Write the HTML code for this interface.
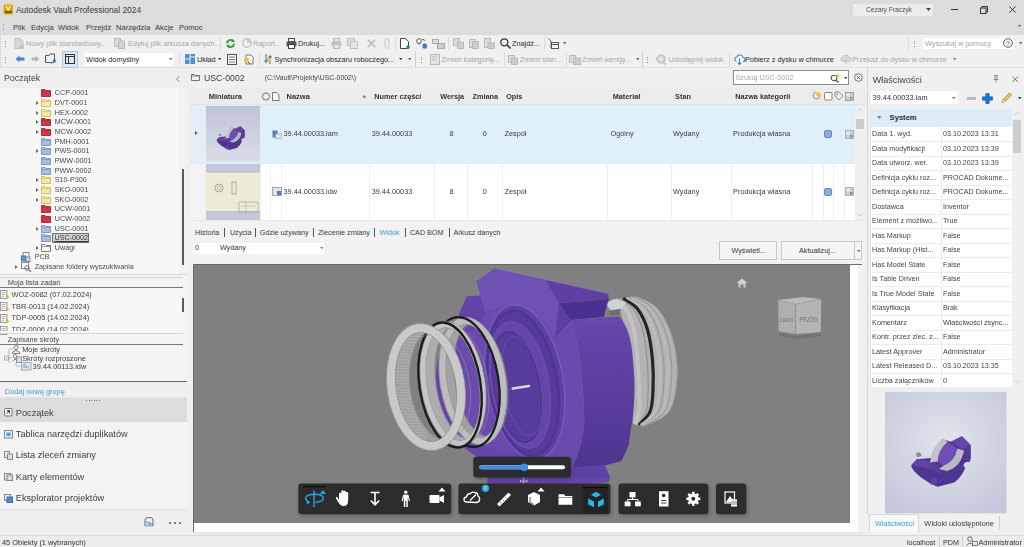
<!DOCTYPE html>
<html><head><meta charset="utf-8">
<style>
*{margin:0;padding:0;box-sizing:border-box}
html,body{width:1024px;height:547px;overflow:hidden;background:#f0f0f0;font-family:"Liberation Sans",sans-serif;color:#333}
.a{position:absolute;white-space:nowrap}
svg.a{overflow:visible}
</style></head>
<body><div style="position:absolute;left:0;top:0;width:1024px;height:547px;filter:blur(0.3px)">
<div class="a" style="left:0px;top:0px;width:1024px;height:35px;background:#dcdcdc;"></div>
<svg class="a" style="left:3px;top:4px;" width="11" height="11" viewBox="0 0 11 11"><rect x="0.5" y="0.5" width="9.5" height="10" rx="1.5" fill="#d9a800"/><rect x="2" y="7" width="6.5" height="2" fill="#6b5200"/><path d="M3 1.8 L5.25 6 L7.5 1.8" stroke="#fff3b0" stroke-width="1.3" fill="none"/></svg>
<div class="a" style="left:16px;top:4.50px;font-size:8.4px;line-height:10px;color:#3a3a3a;">Autodesk Vault Professional 2024</div>
<div class="a" style="left:853px;top:4px;width:80px;height:12px;background:#ececec;"></div>
<div class="a" style="left:866px;top:5.00px;font-size:6.6px;line-height:10px;color:#505050;">Cezary Fraczyk</div>
<svg class="a" style="left:926px;top:8px;" width="6" height="4" viewBox="0 0 6 4"><path d="M0 0 L5 0 L2.5 3 Z" fill="#444"/></svg>
<div class="a" style="left:951px;top:9px;width:7px;height:1.2px;background:#333;"></div>
<svg class="a" style="left:980px;top:6px;" width="8" height="8" viewBox="0 0 8 8"><rect x="0.5" y="2" width="5.5" height="5.5" fill="none" stroke="#333" stroke-width="1"/><path d="M2 2 V0.5 H7.5 V6 H6" fill="none" stroke="#333" stroke-width="1"/></svg>
<svg class="a" style="left:1009px;top:6px;" width="7" height="7" viewBox="0 0 7 7"><path d="M0.5 0.5 L6.5 6.5 M6.5 0.5 L0.5 6.5" stroke="#333" stroke-width="1"/></svg>
<svg class="a" style="left:1018px;top:25px;" width="4" height="3" viewBox="0 0 4 3"><path d="M0 0 L3 0 L1.5 2 Z" fill="#555"/></svg>
<div class="a" style="left:3px;top:24px;width:1px;height:1px;background:#9a9a9a;"></div>
<div class="a" style="left:3px;top:26.5px;width:1px;height:1px;background:#9a9a9a;"></div>
<div class="a" style="left:3px;top:29px;width:1px;height:1px;background:#9a9a9a;"></div>
<div class="a" style="left:13px;top:22.50px;font-size:7.6px;line-height:10px;color:#3a3a3a;">Plik</div>
<div class="a" style="left:31px;top:22.50px;font-size:7.6px;line-height:10px;color:#3a3a3a;">Edycja</div>
<div class="a" style="left:58px;top:22.50px;font-size:7.6px;line-height:10px;color:#3a3a3a;">Widok</div>
<div class="a" style="left:86px;top:22.50px;font-size:7.6px;line-height:10px;color:#3a3a3a;">Przejdź</div>
<div class="a" style="left:116px;top:22.50px;font-size:7.6px;line-height:10px;color:#3a3a3a;">Narzędzia</div>
<div class="a" style="left:155px;top:22.50px;font-size:7.6px;line-height:10px;color:#3a3a3a;">Akcje</div>
<div class="a" style="left:179px;top:22.50px;font-size:7.6px;line-height:10px;color:#3a3a3a;">Pomoc</div>
<div class="a" style="left:0px;top:35px;width:1024px;height:33px;background:#f0f0f0;"></div>
<div class="a" style="left:0px;top:67px;width:1024px;height:1px;background:#e3e3e3;"></div>
<div class="a" style="left:0px;top:35px;width:1px;height:33px;background:#dedede;"></div>
<div class="a" style="left:5px;top:40.5px;width:1px;height:1px;background:#8a8a8a;"></div>
<div class="a" style="left:5px;top:43.0px;width:1px;height:1px;background:#8a8a8a;"></div>
<div class="a" style="left:5px;top:45.5px;width:1px;height:1px;background:#8a8a8a;"></div>
<div class="a" style="left:5px;top:56.5px;width:1px;height:1px;background:#8a8a8a;"></div>
<div class="a" style="left:5px;top:59.0px;width:1px;height:1px;background:#8a8a8a;"></div>
<div class="a" style="left:5px;top:61.5px;width:1px;height:1px;background:#8a8a8a;"></div>
<svg class="a" style="left:14px;top:38px;" width="10" height="11" viewBox="0 0 10 11"><path d="M1 0.5 H6 L9 3.5 V10.5 H1 Z" fill="#d8d8d8" stroke="#bdbdbd"/><rect x="5" y="7" width="5" height="4" fill="#c8c8c8"/></svg>
<div class="a" style="left:26px;top:38.50px;font-size:7.3px;line-height:10px;color:#a8a8a8;">Nowy plik standardowy...</div>
<svg class="a" style="left:114px;top:38px;" width="12" height="11" viewBox="0 0 12 11"><rect x="0.5" y="0.5" width="6" height="8" fill="#dadada" stroke="#bbb"/><rect x="4.5" y="3" width="6" height="7.5" fill="#d0d0d0" stroke="#bbb"/></svg>
<div class="a" style="left:128px;top:38.50px;font-size:7.3px;line-height:10px;color:#a8a8a8;">Edytuj plik arkusza danych...</div>
<div class="a" style="left:220px;top:37px;width:1px;height:13px;background:#dcdcdc;"></div>
<svg class="a" style="left:225px;top:38px;" width="11" height="11" viewBox="0 0 11 11"><path d="M2 5.5 A3.6 3.6 0 0 1 8.6 3.5" stroke="#2e9e3e" stroke-width="1.8" fill="none"/><path d="M9 5.5 A3.6 3.6 0 0 1 2.4 7.5" stroke="#2e9e3e" stroke-width="1.8" fill="none"/><path d="M7 1 L10 3.8 L6.5 4.6Z" fill="#2e9e3e"/><path d="M4 10 L1 7.2 L4.5 6.4Z" fill="#2e9e3e"/></svg>
<svg class="a" style="left:242px;top:38px;" width="10" height="10" viewBox="0 0 10 10"><circle cx="5" cy="5" r="4.2" fill="none" stroke="#c2c2c2" stroke-width="1.4"/><path d="M5 5 V1.5 A3.5 3.5 0 0 1 8.5 5Z" fill="#c8c8c8"/></svg>
<div class="a" style="left:253px;top:38.50px;font-size:7.3px;line-height:10px;color:#a8a8a8;">Raport...</div>
<svg class="a" style="left:286px;top:38px;" width="11" height="11" viewBox="0 0 11 11"><rect x="2.5" y="0.5" width="6" height="3" fill="#fff" stroke="#444"/><rect x="0.5" y="3.5" width="10" height="5" rx="1" fill="#555"/><rect x="2.5" y="6.5" width="6" height="4" fill="#fff" stroke="#444"/></svg>
<div class="a" style="left:298px;top:38.50px;font-size:7.3px;line-height:10px;color:#2a2a2a;">Drukuj...</div>
<svg class="a" style="left:331px;top:38px;" width="11" height="11" viewBox="0 0 11 11"><rect x="2.5" y="0.5" width="6" height="3" fill="#e6e6e6" stroke="#bbb"/><rect x="0.5" y="3.5" width="10" height="5" rx="1" fill="#c4c4c4"/><rect x="2.5" y="6.5" width="6" height="4" fill="#e6e6e6" stroke="#bbb"/></svg>
<svg class="a" style="left:347px;top:38px;" width="11" height="11" viewBox="0 0 11 11"><rect x="0.5" y="0.5" width="7" height="7" fill="#e0e0e0" stroke="#c0c0c0"/><rect x="3.5" y="3.5" width="7" height="7" fill="#e6e6e6" stroke="#c0c0c0"/></svg>
<svg class="a" style="left:367px;top:39px;" width="9" height="9" viewBox="0 0 9 9"><path d="M0.8 0.8 L8.2 8.2 M8.2 0.8 L0.8 8.2" stroke="#b5b5b5" stroke-width="1.4"/></svg>
<svg class="a" style="left:384px;top:38px;" width="6" height="11" viewBox="0 0 6 11"><rect x="1" y="0.8" width="4" height="9.5" rx="2" fill="none" stroke="#c4c4c4" stroke-width="1"/></svg>
<div class="a" style="left:395px;top:37px;width:1px;height:13px;background:#dcdcdc;"></div>
<svg class="a" style="left:400px;top:38px;" width="12" height="11" viewBox="0 0 12 11"><path d="M0.5 0.5 H5.5 L8.5 3.5 V10.5 H0.5Z" fill="#fff" stroke="#444"/><path d="M8 7 V11 M6 9 H10" stroke="#2e9e3e" stroke-width="1.6"/></svg>
<svg class="a" style="left:416px;top:38px;" width="12" height="11" viewBox="0 0 12 11"><circle cx="3" cy="3" r="2.3" fill="#fff" stroke="#555"/><path d="M1 5 Q3 8 5 5" fill="#777"/><rect x="6.5" y="5.5" width="4.5" height="5" rx="1.5" fill="#3b7fc4"/><path d="M6 1 L9 2.5" stroke="#555"/></svg>
<svg class="a" style="left:432px;top:38px;" width="13" height="11" viewBox="0 0 13 11"><rect x="0.5" y="1.5" width="6" height="4" fill="#ddd" stroke="#aaa"/><rect x="5.5" y="5.5" width="7" height="5" fill="#ccc" stroke="#aaa"/></svg>
<div class="a" style="left:448px;top:37px;width:1px;height:13px;background:#dcdcdc;"></div>
<svg class="a" style="left:453px;top:38px;" width="11" height="11" viewBox="0 0 11 11"><rect x="0.5" y="0.5" width="6" height="7" fill="#ddd" stroke="#bbb"/><rect x="4.5" y="4" width="6" height="6.5" fill="#d0d0d0" stroke="#bbb"/></svg>
<svg class="a" style="left:469px;top:38px;" width="10" height="11" viewBox="0 0 10 11"><rect x="0.5" y="1.5" width="6" height="8" fill="#ddd" stroke="#bbb"/><rect x="3.5" y="3.5" width="6" height="7" fill="#ccc" stroke="#bbb"/></svg>
<svg class="a" style="left:484px;top:38px;" width="11" height="11" viewBox="0 0 11 11"><rect x="0.5" y="0.5" width="6" height="9" fill="#ddd" stroke="#bbb"/><rect x="4" y="5" width="6.5" height="5.5" fill="#ccc" stroke="#bbb"/></svg>
<svg class="a" style="left:500px;top:38px;" width="11" height="11" viewBox="0 0 11 11"><circle cx="4.3" cy="4.3" r="3.5" fill="none" stroke="#333" stroke-width="1.3"/><path d="M6.8 6.8 L10.5 10.5" stroke="#333" stroke-width="1.6"/></svg>
<div class="a" style="left:512px;top:38.50px;font-size:7.3px;line-height:10px;color:#2a2a2a;">Znajdź...</div>
<div class="a" style="left:544px;top:37px;width:1px;height:13px;background:#dcdcdc;"></div>
<svg class="a" style="left:548px;top:38px;" width="11" height="11" viewBox="0 0 11 11"><path d="M0.5 0.5 L3 3 V10" stroke="#666" fill="none"/><rect x="3.5" y="4.5" width="7" height="6" fill="#f4f4f4" stroke="#555"/><path d="M3.5 6.5 H10.5" stroke="#555"/></svg>
<svg class="a" style="left:563px;top:42px;" width="4" height="3" viewBox="0 0 4 3"><path d="M0 0 L3.5 0 L1.75 2.2 Z" fill="#666"/></svg>
<div class="a" style="left:908px;top:36px;width:1px;height:14px;background:#dcdcdc;"></div>
<div class="a" style="left:914px;top:40.5px;width:1px;height:1px;background:#8a8a8a;"></div>
<div class="a" style="left:914px;top:43.0px;width:1px;height:1px;background:#8a8a8a;"></div>
<div class="a" style="left:914px;top:45.5px;width:1px;height:1px;background:#8a8a8a;"></div>
<div class="a" style="left:923px;top:38px;width:91px;height:11px;background:#ffffff;"></div>
<div class="a" style="left:925px;top:38.50px;font-size:7.3px;line-height:10px;color:#a5a5a5;">Wyszukaj w pomocy</div>
<svg class="a" style="left:1003px;top:38px;" width="11" height="11" viewBox="0 0 11 11"><circle cx="5" cy="5" r="4.3" fill="none" stroke="#444" stroke-width="0.9"/><text x="5" y="7.8" font-size="7" text-anchor="middle" fill="#444" font-family="Liberation Sans">?</text></svg>
<svg class="a" style="left:1019px;top:42px;" width="4" height="3" viewBox="0 0 4 3"><path d="M0 0 L3.5 0 L1.75 2.2 Z" fill="#666"/></svg>
<svg class="a" style="left:15px;top:55px;" width="10" height="8" viewBox="0 0 10 8"><path d="M0.5 4 L4.5 0.8 V2.6 H9.5 V5.4 H4.5 V7.2Z" fill="#3a86cf"/></svg>
<svg class="a" style="left:31px;top:55px;" width="9" height="8" viewBox="0 0 9 8"><path d="M8.5 4 L4.5 0.8 V2.6 H0.5 V5.4 H4.5 V7.2Z" fill="#b8b8b8"/></svg>
<svg class="a" style="left:45px;top:53px;" width="12" height="12" viewBox="0 0 12 12"><path d="M0.5 2.5 H4 L5 1 H9.5 V9.5 H0.5Z" fill="none" stroke="#555"/><path d="M6 10 Q9 10 9.5 7 L8 7.5 M9.5 7 L11 8.5" stroke="#2f7fc8" stroke-width="1.4" fill="none"/></svg>
<div class="a" style="left:62px;top:51px;width:16px;height:17px;background:#dbe9f5;border:1px solid #a9cbe6;"></div>
<svg class="a" style="left:65px;top:54px;" width="10" height="10" viewBox="0 0 10 10"><rect x="0.5" y="0.5" width="9" height="9" fill="none" stroke="#333" stroke-width="1"/><path d="M0.5 2.5 H9.5 M3.5 2.5 V9.5" stroke="#333" stroke-width="1"/></svg>
<div class="a" style="left:84px;top:53px;width:90px;height:13px;background:#ffffff;"></div>
<div class="a" style="left:86px;top:54.50px;font-size:7.3px;line-height:10px;color:#2a2a2a;">Widok domyślny</div>
<svg class="a" style="left:169px;top:58px;" width="4" height="3" viewBox="0 0 4 3"><path d="M0 0 L3.5 0 L1.75 2.2 Z" fill="#777"/></svg>
<div class="a" style="left:179px;top:52px;width:1px;height:14px;background:#dcdcdc;"></div>
<svg class="a" style="left:185px;top:54px;" width="11" height="11" viewBox="0 0 11 11"><rect x="0" y="0" width="4.5" height="4.5" fill="#4a92d6"/><rect x="5.5" y="0" width="4.5" height="2.5" fill="#4a92d6"/><rect x="5.5" y="3.5" width="4.5" height="6.5" fill="#4a92d6"/><rect x="0" y="5.5" width="4.5" height="4.5" fill="#4a92d6"/></svg>
<div class="a" style="left:197px;top:54.50px;font-size:7.3px;line-height:10px;color:#2a2a2a;">Układ</div>
<svg class="a" style="left:218px;top:58px;" width="4" height="3" viewBox="0 0 4 3"><path d="M0 0 L3.5 0 L1.75 2.2 Z" fill="#444"/></svg>
<svg class="a" style="left:227px;top:54px;" width="10" height="11" viewBox="0 0 10 11"><rect x="0.5" y="0.5" width="9" height="10" fill="#fafafa" stroke="#555"/><path d="M2 3 H8 M2 5.5 H8 M2 8 H8" stroke="#777"/></svg>
<svg class="a" style="left:243px;top:54px;" width="11" height="11" viewBox="0 0 11 11"><path d="M3 1 H8 L10 3 V10 H3Z" fill="#fff" stroke="#777"/><circle cx="3.5" cy="6" r="2.5" fill="#f0c040"/><path d="M5 8 L7 10" stroke="#555"/></svg>
<div class="a" style="left:259px;top:52px;width:1px;height:14px;background:#dcdcdc;"></div>
<svg class="a" style="left:264px;top:53px;" width="8" height="12" viewBox="0 0 8 12"><path d="M2 1 V9 L0.5 7.5 M2 9 L3.5 7.5" stroke="#3a86cf" stroke-width="1.2" fill="none"/><path d="M6 11 V3 L4.5 4.5 M6 3 L7.5 4.5" stroke="#777" stroke-width="1.2" fill="none"/><rect x="3" y="5" width="3.5" height="4" fill="#f0c040"/></svg>
<div class="a" style="left:274.5px;top:54.50px;font-size:7.3px;line-height:10px;color:#2a2a2a;">Synchronizacja obszaru roboczego...</div>
<svg class="a" style="left:399px;top:58px;" width="4" height="3" viewBox="0 0 4 3"><path d="M0 0 L3.5 0 L1.75 2.2 Z" fill="#444"/></svg>
<svg class="a" style="left:408px;top:58px;" width="4" height="3" viewBox="0 0 4 3"><path d="M0 0 L3.5 0 L1.75 2.2 Z" fill="#666"/></svg>
<div class="a" style="left:415px;top:51px;width:1px;height:16px;background:#cfcfcf;"></div>
<div class="a" style="left:421px;top:56.5px;width:1px;height:1px;background:#8a8a8a;"></div>
<div class="a" style="left:421px;top:59.0px;width:1px;height:1px;background:#8a8a8a;"></div>
<div class="a" style="left:421px;top:61.5px;width:1px;height:1px;background:#8a8a8a;"></div>
<svg class="a" style="left:430px;top:54px;" width="11" height="11" viewBox="0 0 11 11"><rect x="0.5" y="0.5" width="9" height="10" fill="#e2e2e2" stroke="#bbb"/><path d="M2 3 H7 M2 5.5 H6" stroke="#c0c0c0"/></svg>
<div class="a" style="left:441.5px;top:54.50px;font-size:7.3px;line-height:10px;color:#a8a8a8;">Zmień kategorię...</div>
<div class="a" style="left:504px;top:52px;width:1px;height:14px;background:#dcdcdc;"></div>
<svg class="a" style="left:508px;top:54px;" width="10" height="11" viewBox="0 0 10 11"><rect x="0.5" y="1.5" width="6" height="7" fill="#ddd" stroke="#bbb"/><rect x="3.5" y="4" width="6" height="6.5" fill="#ccc" stroke="#bbb"/></svg>
<div class="a" style="left:519.7px;top:54.50px;font-size:7.3px;line-height:10px;color:#a8a8a8;">Zmień stan...</div>
<div class="a" style="left:566px;top:52px;width:1px;height:14px;background:#dcdcdc;"></div>
<svg class="a" style="left:569px;top:54px;" width="12" height="11" viewBox="0 0 12 11"><rect x="0.5" y="1.5" width="6" height="7" fill="#ddd" stroke="#bbb"/><rect x="4.5" y="4" width="7" height="6.5" fill="#ccc" stroke="#bbb"/></svg>
<div class="a" style="left:582px;top:54.50px;font-size:7.3px;line-height:10px;color:#a8a8a8;">Zmień wersję...</div>
<svg class="a" style="left:636px;top:58px;" width="4" height="3" viewBox="0 0 4 3"><path d="M0 0 L3.5 0 L1.75 2.2 Z" fill="#666"/></svg>
<div class="a" style="left:642px;top:51px;width:1px;height:16px;background:#cfcfcf;"></div>
<div class="a" style="left:647px;top:56.5px;width:1px;height:1px;background:#8a8a8a;"></div>
<div class="a" style="left:647px;top:59.0px;width:1px;height:1px;background:#8a8a8a;"></div>
<div class="a" style="left:647px;top:61.5px;width:1px;height:1px;background:#8a8a8a;"></div>
<svg class="a" style="left:656px;top:54px;" width="10" height="11" viewBox="0 0 10 11"><circle cx="5" cy="5" r="4.3" fill="#d2d2d2" stroke="#bdbdbd"/><circle cx="5" cy="5" r="2" fill="#e8e8e8"/><path d="M7 8 L9.5 10.5" stroke="#bbb" stroke-width="1.4"/></svg>
<div class="a" style="left:668.5px;top:54.50px;font-size:7.3px;line-height:10px;color:#a8a8a8;">Udostępnij widok</div>
<div class="a" style="left:729px;top:52px;width:1px;height:14px;background:#dcdcdc;"></div>
<svg class="a" style="left:734px;top:54px;" width="11" height="11" viewBox="0 0 11 11"><path d="M2.5 7.5 A2.3 2.3 0 0 1 2.8 3 A3.3 3.3 0 0 1 9 3.5 A2 2 0 0 1 9 7.5" fill="#fff" stroke="#3a86cf" stroke-width="1.1"/><path d="M5.5 4.5 V10.5 M3.8 8.8 L5.5 10.5 L7.2 8.8" stroke="#3a86cf" stroke-width="1.1" fill="none"/></svg>
<div class="a" style="left:745px;top:54.50px;font-size:7.3px;line-height:10px;color:#2a2a2a;">Pobierz z dysku w chmurze</div>
<svg class="a" style="left:840px;top:54px;" width="11" height="11" viewBox="0 0 11 11"><path d="M2.5 7.5 A2.3 2.3 0 0 1 2.8 3 A3.3 3.3 0 0 1 9 3.5 A2 2 0 0 1 9 7.5Z" fill="#d8d8d8" stroke="#c4c4c4" stroke-width="1"/><path d="M5.5 10.5 V5" stroke="#c4c4c4" stroke-width="1.1"/></svg>
<div class="a" style="left:852px;top:54.50px;font-size:7.3px;line-height:10px;color:#a8a8a8;">Przekaż do dysku w chmurze</div>
<svg class="a" style="left:953px;top:58px;" width="4" height="3" viewBox="0 0 4 3"><path d="M0 0 L3.5 0 L1.75 2.2 Z" fill="#777"/></svg>
<div class="a" style="left:0px;top:68px;width:188px;height:20px;background:#efefef;"></div>
<div class="a" style="left:4px;top:73.30px;font-size:8.8px;line-height:10px;color:#454545;">Początek</div>
<svg class="a" style="left:175.5px;top:75.5px;" width="4" height="6" viewBox="0 0 4 6"><path d="M3.2 0.3 L0.6 3 L3.2 5.7" stroke="#666" stroke-width="0.8" fill="none"/></svg>
<div class="a" style="left:0px;top:88px;width:179px;height:186px;background:#f7f7f7;"></div>
<div class="a" style="left:179px;top:88px;width:8px;height:186px;background:#f2f2f2;"></div>
<div class="a" style="left:181.5px;top:169px;width:2px;height:96px;background:#5a5a5a;"></div>
<svg class="a" style="left:40.5px;top:89.4px;" width="11" height="8" viewBox="0 0 11 8"><path d="M0.5 0.5 H4 L5 1.5 H9.5 V7.5 H0.5Z" fill="#d03848" stroke="#b82a3a" stroke-width="1"/><path d="M0.5 2.5 H9.5" stroke="#b82a3a" stroke-width="0.7"/></svg>
<div class="a" style="left:54.8px;top:88.40px;font-size:7.2px;line-height:10px;color:#4a4a4a;">CCP-0001</div>
<svg class="a" style="left:35.5px;top:101.05000000000001px;" width="3" height="5" viewBox="0 0 3 5"><path d="M0 0 L2.6 2 L0 4Z" fill="#666"/></svg>
<svg class="a" style="left:40.5px;top:99.05000000000001px;" width="11" height="8" viewBox="0 0 11 8"><path d="M0.5 0.5 H4 L5 1.5 H9.5 V7.5 H0.5Z" fill="#f2ec9a" stroke="#c9c270" stroke-width="1"/><path d="M0.5 2.5 H9.5" stroke="#c9c270" stroke-width="0.7"/></svg>
<div class="a" style="left:54.8px;top:98.05px;font-size:7.2px;line-height:10px;color:#4a4a4a;">DVT-0001</div>
<svg class="a" style="left:35.5px;top:110.7px;" width="3" height="5" viewBox="0 0 3 5"><path d="M0 0 L2.6 2 L0 4Z" fill="#666"/></svg>
<svg class="a" style="left:40.5px;top:108.7px;" width="11" height="8" viewBox="0 0 11 8"><path d="M0.5 0.5 H4 L5 1.5 H9.5 V7.5 H0.5Z" fill="#f2ec9a" stroke="#c9c270" stroke-width="1"/><path d="M0.5 2.5 H9.5" stroke="#c9c270" stroke-width="0.7"/></svg>
<div class="a" style="left:54.8px;top:107.70px;font-size:7.2px;line-height:10px;color:#4a4a4a;">HEX-0002</div>
<svg class="a" style="left:35.5px;top:120.35000000000001px;" width="3" height="5" viewBox="0 0 3 5"><path d="M0 0 L2.6 2 L0 4Z" fill="#666"/></svg>
<svg class="a" style="left:40.5px;top:118.35000000000001px;" width="11" height="8" viewBox="0 0 11 8"><path d="M0.5 0.5 H4 L5 1.5 H9.5 V7.5 H0.5Z" fill="#d03848" stroke="#b82a3a" stroke-width="1"/><path d="M0.5 2.5 H9.5" stroke="#b82a3a" stroke-width="0.7"/></svg>
<div class="a" style="left:54.8px;top:117.35px;font-size:7.2px;line-height:10px;color:#4a4a4a;">MCW-0001</div>
<svg class="a" style="left:35.5px;top:130.0px;" width="3" height="5" viewBox="0 0 3 5"><path d="M0 0 L2.6 2 L0 4Z" fill="#666"/></svg>
<svg class="a" style="left:40.5px;top:128.0px;" width="11" height="8" viewBox="0 0 11 8"><path d="M0.5 0.5 H4 L5 1.5 H9.5 V7.5 H0.5Z" fill="#d03848" stroke="#b82a3a" stroke-width="1"/><path d="M0.5 2.5 H9.5" stroke="#b82a3a" stroke-width="0.7"/></svg>
<div class="a" style="left:54.8px;top:127.00px;font-size:7.2px;line-height:10px;color:#4a4a4a;">MCW-0002</div>
<svg class="a" style="left:40.5px;top:137.65px;" width="11" height="8" viewBox="0 0 11 8"><path d="M0.5 0.5 H4 L5 1.5 H9.5 V7.5 H0.5Z" fill="#a9bedf" stroke="#8097c0" stroke-width="1"/><path d="M0.5 2.5 H9.5" stroke="#8097c0" stroke-width="0.7"/></svg>
<div class="a" style="left:54.8px;top:136.65px;font-size:7.2px;line-height:10px;color:#4a4a4a;">PMH-0001</div>
<svg class="a" style="left:35.5px;top:149.3px;" width="3" height="5" viewBox="0 0 3 5"><path d="M0 0 L2.6 2 L0 4Z" fill="#666"/></svg>
<svg class="a" style="left:40.5px;top:147.3px;" width="11" height="8" viewBox="0 0 11 8"><path d="M0.5 0.5 H4 L5 1.5 H9.5 V7.5 H0.5Z" fill="#a9bedf" stroke="#8097c0" stroke-width="1"/><path d="M0.5 2.5 H9.5" stroke="#8097c0" stroke-width="0.7"/></svg>
<div class="a" style="left:54.8px;top:146.30px;font-size:7.2px;line-height:10px;color:#4a4a4a;">PWS-0001</div>
<svg class="a" style="left:40.5px;top:156.95px;" width="11" height="8" viewBox="0 0 11 8"><path d="M0.5 0.5 H4 L5 1.5 H9.5 V7.5 H0.5Z" fill="#a9bedf" stroke="#8097c0" stroke-width="1"/><path d="M0.5 2.5 H9.5" stroke="#8097c0" stroke-width="0.7"/></svg>
<div class="a" style="left:54.8px;top:155.95px;font-size:7.2px;line-height:10px;color:#4a4a4a;">PWW-0001</div>
<svg class="a" style="left:40.5px;top:166.60000000000002px;" width="11" height="8" viewBox="0 0 11 8"><path d="M0.5 0.5 H4 L5 1.5 H9.5 V7.5 H0.5Z" fill="#a9bedf" stroke="#8097c0" stroke-width="1"/><path d="M0.5 2.5 H9.5" stroke="#8097c0" stroke-width="0.7"/></svg>
<div class="a" style="left:54.8px;top:165.60px;font-size:7.2px;line-height:10px;color:#4a4a4a;">PWW-0002</div>
<svg class="a" style="left:35.5px;top:178.25px;" width="3" height="5" viewBox="0 0 3 5"><path d="M0 0 L2.6 2 L0 4Z" fill="#666"/></svg>
<svg class="a" style="left:40.5px;top:176.25px;" width="11" height="8" viewBox="0 0 11 8"><path d="M0.5 0.5 H4 L5 1.5 H9.5 V7.5 H0.5Z" fill="#f2ec9a" stroke="#c9c270" stroke-width="1"/><path d="M0.5 2.5 H9.5" stroke="#c9c270" stroke-width="0.7"/></svg>
<div class="a" style="left:54.8px;top:175.25px;font-size:7.2px;line-height:10px;color:#4a4a4a;">S10-P300</div>
<svg class="a" style="left:35.5px;top:187.9px;" width="3" height="5" viewBox="0 0 3 5"><path d="M0 0 L2.6 2 L0 4Z" fill="#666"/></svg>
<svg class="a" style="left:40.5px;top:185.9px;" width="11" height="8" viewBox="0 0 11 8"><path d="M0.5 0.5 H4 L5 1.5 H9.5 V7.5 H0.5Z" fill="#f2ec9a" stroke="#c9c270" stroke-width="1"/><path d="M0.5 2.5 H9.5" stroke="#c9c270" stroke-width="0.7"/></svg>
<div class="a" style="left:54.8px;top:184.90px;font-size:7.2px;line-height:10px;color:#4a4a4a;">SKO-0001</div>
<svg class="a" style="left:35.5px;top:197.55px;" width="3" height="5" viewBox="0 0 3 5"><path d="M0 0 L2.6 2 L0 4Z" fill="#666"/></svg>
<svg class="a" style="left:40.5px;top:195.55px;" width="11" height="8" viewBox="0 0 11 8"><path d="M0.5 0.5 H4 L5 1.5 H9.5 V7.5 H0.5Z" fill="#f2ec9a" stroke="#c9c270" stroke-width="1"/><path d="M0.5 2.5 H9.5" stroke="#c9c270" stroke-width="0.7"/></svg>
<div class="a" style="left:54.8px;top:194.55px;font-size:7.2px;line-height:10px;color:#4a4a4a;">SKO-0002</div>
<svg class="a" style="left:40.5px;top:205.20000000000002px;" width="11" height="8" viewBox="0 0 11 8"><path d="M0.5 0.5 H4 L5 1.5 H9.5 V7.5 H0.5Z" fill="#d03848" stroke="#b82a3a" stroke-width="1"/><path d="M0.5 2.5 H9.5" stroke="#b82a3a" stroke-width="0.7"/></svg>
<div class="a" style="left:54.8px;top:204.20px;font-size:7.2px;line-height:10px;color:#4a4a4a;">UCW-0001</div>
<svg class="a" style="left:40.5px;top:214.85000000000002px;" width="11" height="8" viewBox="0 0 11 8"><path d="M0.5 0.5 H4 L5 1.5 H9.5 V7.5 H0.5Z" fill="#d03848" stroke="#b82a3a" stroke-width="1"/><path d="M0.5 2.5 H9.5" stroke="#b82a3a" stroke-width="0.7"/></svg>
<div class="a" style="left:54.8px;top:213.85px;font-size:7.2px;line-height:10px;color:#4a4a4a;">UCW-0002</div>
<svg class="a" style="left:35.5px;top:226.5px;" width="3" height="5" viewBox="0 0 3 5"><path d="M0 0 L2.6 2 L0 4Z" fill="#666"/></svg>
<svg class="a" style="left:40.5px;top:224.5px;" width="11" height="8" viewBox="0 0 11 8"><path d="M0.5 0.5 H4 L5 1.5 H9.5 V7.5 H0.5Z" fill="#a9bedf" stroke="#8097c0" stroke-width="1"/><path d="M0.5 2.5 H9.5" stroke="#8097c0" stroke-width="0.7"/></svg>
<div class="a" style="left:54.8px;top:223.50px;font-size:7.2px;line-height:10px;color:#4a4a4a;">USC-0001</div>
<svg class="a" style="left:40.5px;top:234.15px;" width="11" height="8" viewBox="0 0 11 8"><path d="M0.5 0.5 H4 L5 1.5 H9.5 V7.5 H0.5Z" fill="#a9bedf" stroke="#8097c0" stroke-width="1"/><path d="M0.5 2.5 H9.5" stroke="#8097c0" stroke-width="0.7"/></svg>
<div class="a" style="left:52px;top:233.35px;width:37px;height:9.5px;background:#d4d4d4;border:1px solid #6a6a6a;"></div>
<div class="a" style="left:54.5px;top:233.15px;font-size:7.2px;line-height:10px;color:#333;text-decoration:underline;">USC-0002</div>
<svg class="a" style="left:35.5px;top:245.8px;" width="3" height="5" viewBox="0 0 3 5"><path d="M0 0 L2.6 2 L0 4Z" fill="#666"/></svg>
<svg class="a" style="left:40.5px;top:243.8px;" width="11" height="8" viewBox="0 0 11 8"><path d="M0.5 0.5 H4 L5 1.5 H9.5 V7.5 H0.5Z" fill="#ffffff" stroke="#777" stroke-width="1"/><path d="M0.5 2.5 H9.5" stroke="#777" stroke-width="0.7"/></svg>
<div class="a" style="left:54.8px;top:242.80px;font-size:7.2px;line-height:10px;color:#4a4a4a;">Uwagi</div>
<svg class="a" style="left:21px;top:252.45000000000005px;" width="10" height="10" viewBox="0 0 10 10"><rect x="2" y="0.5" width="6" height="7" fill="#fff" stroke="#888"/><rect x="0.5" y="4" width="4.5" height="5" fill="#5a9ad8" stroke="#3a76b8"/><rect x="5" y="5" width="4" height="4.5" fill="#ddd" stroke="#888"/></svg>
<div class="a" style="left:34.7px;top:252.45px;font-size:7.2px;line-height:10px;color:#4a4a4a;">PCB</div>
<svg class="a" style="left:15px;top:265.1px;" width="3" height="5" viewBox="0 0 3 5"><path d="M0 0 L2.6 2 L0 4Z" fill="#666"/></svg>
<svg class="a" style="left:21px;top:262.1px;" width="11" height="10" viewBox="0 0 11 10"><rect x="0.5" y="0.5" width="7" height="6" fill="#fff" stroke="#888"/><circle cx="6" cy="6" r="2.3" fill="none" stroke="#777"/><path d="M7.6 7.6 L10 10" stroke="#777" stroke-width="1.2"/></svg>
<div class="a" style="left:34.7px;top:262.10px;font-size:7.2px;line-height:10px;color:#4a4a4a;">Zapisane foldery wyszukiwania</div>
<div class="a" style="left:0px;top:274px;width:188px;height:1px;background:#d8d8d8;"></div>
<div class="a" style="left:0px;top:275px;width:187px;height:107px;background:#f4f4f4;"></div>
<div class="a" style="left:0px;top:277px;width:183px;height:1px;background:#d4d4d4;"></div>
<div class="a" style="left:7.7px;top:278.00px;font-size:7.3px;line-height:10px;color:#4a4a4a;">Moja lista zadań</div>
<div class="a" style="left:0px;top:287px;width:183px;height:1px;background:#7a7a7a;"></div>
<div class="a" style="left:0px;top:288px;width:183px;height:44px;background:#f7f7f7;"></div>
<svg class="a" style="left:0px;top:290.1px;" width="11" height="10" viewBox="0 0 11 10"><rect x="0.5" y="0.5" width="6.5" height="8" fill="#f4f4f4" stroke="#888" stroke-width="0.8"/><path d="M2 2.5 H5.5 M2 4.5 H5.5 M2 6.5 H4" stroke="#999" stroke-width="0.7"/><path d="M6 5 L9.5 7.3 L6 9.5Z" fill="#e8b030"/></svg>
<div class="a" style="left:11.6px;top:289.60px;font-size:7.4px;line-height:10px;color:#3f3f3f;">WOZ-0082 (07.02.2024)</div>
<svg class="a" style="left:0px;top:302.0px;" width="11" height="10" viewBox="0 0 11 10"><rect x="0.5" y="0.5" width="6.5" height="8" fill="#f4f4f4" stroke="#888" stroke-width="0.8"/><path d="M2 2.5 H5.5 M2 4.5 H5.5 M2 6.5 H4" stroke="#999" stroke-width="0.7"/><path d="M6 5 L9.5 7.3 L6 9.5Z" fill="#e8b030"/></svg>
<div class="a" style="left:11.6px;top:301.50px;font-size:7.4px;line-height:10px;color:#3f3f3f;">TBR-0013 (14.02.2024)</div>
<svg class="a" style="left:0px;top:313.90000000000003px;" width="11" height="10" viewBox="0 0 11 10"><rect x="0.5" y="0.5" width="6.5" height="8" fill="#f4f4f4" stroke="#888" stroke-width="0.8"/><path d="M2 2.5 H5.5 M2 4.5 H5.5 M2 6.5 H4" stroke="#999" stroke-width="0.7"/><path d="M6 5 L9.5 7.3 L6 9.5Z" fill="#e8b030"/></svg>
<div class="a" style="left:11.6px;top:313.40px;font-size:7.4px;line-height:10px;color:#3f3f3f;">TDP-0005 (14.02.2024)</div>
<svg class="a" style="left:0px;top:325.8px;" width="11" height="10" viewBox="0 0 11 10"><rect x="0.5" y="0.5" width="6.5" height="8" fill="#f4f4f4" stroke="#888" stroke-width="0.8"/><path d="M2 2.5 H5.5 M2 4.5 H5.5 M2 6.5 H4" stroke="#999" stroke-width="0.7"/><path d="M6 5 L9.5 7.3 L6 9.5Z" fill="#e8b030"/></svg>
<div class="a" style="left:11.6px;top:325.30px;font-size:7.4px;line-height:10px;color:#3f3f3f;">TDZ-0006 (14.02.2024)</div>
<div class="a" style="left:0px;top:331px;width:183px;height:2px;background:#f7f7f7;"></div>
<div class="a" style="left:182px;top:298px;width:1.5px;height:14px;background:#5a5a5a;"></div>
<div class="a" style="left:0px;top:333px;width:183px;height:1px;background:#d4d4d4;"></div>
<div class="a" style="left:7.7px;top:335.20px;font-size:7.3px;line-height:10px;color:#4a4a4a;">Zapisane skróty</div>
<div class="a" style="left:0px;top:344px;width:183px;height:1px;background:#7a7a7a;"></div>
<svg class="a" style="left:2px;top:345px;" width="40" height="26" viewBox="0 0 40 26"><path d="M11 4 H7 V18 M7 13 H10 M4.5 13 H6 M17 17 H14 V21 H18" stroke="#999" stroke-width="0.6" fill="none"/><rect x="2.5" y="11" width="4" height="4" fill="#fff" stroke="#888" stroke-width="0.6"/><path d="M3.5 13 H5.5" stroke="#555" stroke-width="0.6"/></svg>
<svg class="a" style="left:12px;top:344.5px;" width="9" height="9" viewBox="0 0 9 9"><circle cx="4" cy="2.6" r="2" fill="none" stroke="#666" stroke-width="0.8"/><path d="M0.5 8.5 V7 Q4 4 7.5 7 V8.5Z" fill="none" stroke="#666" stroke-width="0.8"/></svg>
<div class="a" style="left:22.2px;top:344.60px;font-size:7.4px;line-height:10px;color:#3f3f3f;">Moje skróty</div>
<svg class="a" style="left:12px;top:353.5px;" width="10" height="9" viewBox="0 0 10 9"><circle cx="3" cy="2.4" r="1.8" fill="none" stroke="#666" stroke-width="0.8"/><path d="M0.5 7 Q3 4 5 6" fill="none" stroke="#666" stroke-width="0.8"/><rect x="4.5" y="3" width="5" height="5.5" fill="#ddd" stroke="#777" stroke-width="0.7"/></svg>
<div class="a" style="left:22.2px;top:353.60px;font-size:7.4px;line-height:10px;color:#3f3f3f;">Skróty rozproszone</div>
<svg class="a" style="left:21px;top:362px;" width="11" height="9" viewBox="0 0 11 9"><rect x="0.5" y="0.5" width="9.5" height="7.5" fill="#dfe6ee" stroke="#8a9aae" stroke-width="0.8"/><path d="M2 3 H5 M2 5 H8" stroke="#6a7a8e" stroke-width="0.8"/></svg>
<div class="a" style="left:32.6px;top:362.20px;font-size:7.4px;line-height:10px;color:#3f3f3f;">39.44.00113.idw</div>
<div class="a" style="left:0px;top:381px;width:187px;height:1px;background:#6a6a6a;"></div>
<div class="a" style="left:4.8px;top:387.00px;font-size:7.4px;line-height:10px;color:#3a9fd2;">Dodaj nową grupę</div>
<div class="a" style="left:0px;top:397px;width:187px;height:1px;background:#e4e4e4;"></div>
<div class="a" style="left:0px;top:398px;width:187px;height:111px;background:#f3f3f3;"></div>
<div class="a" style="left:0px;top:398.4px;width:187px;height:24px;background:#dcdcdc;"></div>
<div class="a" style="left:86.0px;top:400px;width:1px;height:1px;background:#777;"></div>
<div class="a" style="left:88.5px;top:400px;width:1px;height:1px;background:#777;"></div>
<div class="a" style="left:91.0px;top:400px;width:1px;height:1px;background:#777;"></div>
<div class="a" style="left:93.5px;top:400px;width:1px;height:1px;background:#777;"></div>
<div class="a" style="left:96.0px;top:400px;width:1px;height:1px;background:#777;"></div>
<div class="a" style="left:98.5px;top:400px;width:1px;height:1px;background:#777;"></div>
<svg class="a" style="left:3.5px;top:408.3px;" width="10" height="9" viewBox="0 0 10 9"><rect x="0.5" y="0.5" width="7.5" height="7.5" rx="1" fill="#f4f4f4" stroke="#777"/><path d="M3 2.5 H5.5 V5.5 M5.5 2.5 L2.5 5.5" stroke="#444" stroke-width="0.9"/></svg>
<div class="a" style="left:15.8px;top:406.60px;font-size:9.2px;line-height:12px;color:#3c3c3c;">Początek</div>
<svg class="a" style="left:3.5px;top:429.65000000000003px;" width="10" height="9" viewBox="0 0 10 9"><rect x="0.5" y="0.5" width="8" height="7.5" fill="#e6eef6" stroke="#7a8a9a"/><rect x="2.5" y="2.5" width="4" height="3.5" fill="#4a9ad8"/></svg>
<div class="a" style="left:15.8px;top:427.95px;font-size:9.2px;line-height:12px;color:#3c3c3c;">Tablica narzędzi duplikatów</div>
<svg class="a" style="left:3.5px;top:451.0px;" width="10" height="9" viewBox="0 0 10 9"><rect x="0.5" y="0.5" width="5" height="6" fill="#e8e8e8" stroke="#888"/><rect x="3.5" y="3" width="5" height="5.5" fill="#ddd" stroke="#888"/></svg>
<div class="a" style="left:15.8px;top:449.30px;font-size:9.2px;line-height:12px;color:#3c3c3c;">Lista zleceń zmiany</div>
<svg class="a" style="left:3.5px;top:472.35px;" width="10" height="9" viewBox="0 0 10 9"><rect x="0.5" y="1.5" width="6" height="6.5" fill="#e8e8e8" stroke="#888"/><rect x="3" y="3" width="5.5" height="5.5" fill="#d8d8d8" stroke="#888"/></svg>
<div class="a" style="left:15.8px;top:470.65px;font-size:9.2px;line-height:12px;color:#3c3c3c;">Karty elementów</div>
<svg class="a" style="left:3.5px;top:493.7px;" width="10" height="9" viewBox="0 0 10 9"><rect x="0.5" y="0.5" width="6" height="6" fill="#eee" stroke="#888"/><rect x="3" y="3" width="5.5" height="5.5" fill="#4a8ad0" stroke="#3a6aa8"/></svg>
<div class="a" style="left:15.8px;top:492.00px;font-size:9.2px;line-height:12px;color:#3c3c3c;">Eksplorator projektów</div>
<div class="a" style="left:0px;top:508.75px;width:187px;height:26px;background:#efefef;"></div>
<div class="a" style="left:0px;top:508.75px;width:187px;height:1px;background:#e6e6e6;"></div>
<svg class="a" style="left:144px;top:517px;" width="10" height="10" viewBox="0 0 10 10"><path d="M1 9 V3 Q1 0.5 4 0.5 H6 Q9 0.5 9 3 V9" fill="none" stroke="#5a6e84" stroke-width="1"/><circle cx="3" cy="7" r="2.3" fill="#bcd6ec" stroke="#5a8ab8" stroke-width="0.8"/><path d="M6 5 V9.5 M8 6 V9.5" stroke="#5a6e84" stroke-width="0.9"/></svg>
<div class="a" style="left:168.5px;top:521.5px;width:2px;height:2px;background:#555;border-radius:1px;"></div>
<div class="a" style="left:173.5px;top:521.5px;width:2px;height:2px;background:#555;border-radius:1px;"></div>
<div class="a" style="left:178.5px;top:521.5px;width:2px;height:2px;background:#555;border-radius:1px;"></div>
<div class="a" style="left:187px;top:68px;width:6px;height:466px;background:#f0f0f0;"></div>
<svg class="a" style="left:191px;top:74px;" width="10" height="8" viewBox="0 0 10 8"><path d="M0.5 0.5 H3.5 L4.5 1.5 H8.5 V6.5 H0.5Z" fill="none" stroke="#666" stroke-width="0.9"/><path d="M0.5 2 H8.5" stroke="#666" stroke-width="0.7"/></svg>
<div class="a" style="left:204px;top:73.00px;font-size:8.7px;line-height:10px;color:#3c3c3c;">USC-0002</div>
<div class="a" style="left:264.7px;top:73.00px;font-size:6.9px;line-height:10px;color:#444;">(C:\Vault\Projekty\USC-0002\)</div>
<div class="a" style="left:733px;top:70.3px;width:116px;height:15px;background:#ffffff;border:1px solid #8c8c8c;"></div>
<div class="a" style="left:735.5px;top:73.00px;font-size:7.3px;line-height:10px;color:#aaaaaa;">Szukaj USC-0002</div>
<svg class="a" style="left:830px;top:73px;" width="11" height="10" viewBox="0 0 11 10"><circle cx="4" cy="5" r="2.8" fill="none" stroke="#555" stroke-width="1.1"/><path d="M6 7 L8.5 9.5" stroke="#555" stroke-width="1.3"/><path d="M7.5 0.5 L8.2 2.2 L10 2.5 L8.5 3.5 L9 5 L7.5 4 L6 5 L6.5 3.5 L5 2.5 L6.8 2.2Z" fill="#f0b800"/></svg>
<svg class="a" style="left:843.5px;top:77px;" width="4" height="3" viewBox="0 0 4 3"><path d="M0 0 L3.5 0 L1.75 2.2 Z" fill="#555"/></svg>
<svg class="a" style="left:853.5px;top:73px;" width="10" height="10" viewBox="0 0 10 10"><circle cx="4.5" cy="4.5" r="3.9" fill="none" stroke="#666" stroke-width="0.9"/><path d="M3 3 L6 6 M6 3 L3 6" stroke="#666" stroke-width="0.9"/></svg>
<div class="a" style="left:190px;top:88px;width:675px;height:132px;background:#ffffff;"></div>
<div class="a" style="left:190px;top:88px;width:675px;height:16px;background:#ececec;"></div>
<div class="a" style="left:190px;top:104px;width:675px;height:1px;background:#e2e2e2;"></div>
<div class="a" style="left:190px;top:105px;width:665px;height:57.5px;background:#dff0fb;"></div>
<div class="a" style="left:190px;top:105px;width:15.5px;height:115px;background:#f3f3f3;"></div>
<div class="a" style="left:190px;top:105px;width:15.5px;height:57.5px;background:#e4eef6;"></div>
<svg class="a" style="left:195px;top:131px;" width="3" height="5" viewBox="0 0 3 5"><path d="M0 0 L2.6 2 L0 4Z" fill="#555"/></svg>
<div class="a" style="left:205.3px;top:105px;width:1px;height:57.5px;background:#e4f0f8;"></div>
<div class="a" style="left:205.3px;top:163.5px;width:1px;height:56.5px;background:#efefef;"></div>
<div class="a" style="left:259.8px;top:105px;width:1px;height:57.5px;background:#e4f0f8;"></div>
<div class="a" style="left:259.8px;top:163.5px;width:1px;height:56.5px;background:#efefef;"></div>
<div class="a" style="left:269.5px;top:105px;width:1px;height:57.5px;background:#e4f0f8;"></div>
<div class="a" style="left:269.5px;top:163.5px;width:1px;height:56.5px;background:#efefef;"></div>
<div class="a" style="left:280.5px;top:105px;width:1px;height:57.5px;background:#e4f0f8;"></div>
<div class="a" style="left:280.5px;top:163.5px;width:1px;height:56.5px;background:#efefef;"></div>
<div class="a" style="left:369.2px;top:105px;width:1px;height:57.5px;background:#e4f0f8;"></div>
<div class="a" style="left:369.2px;top:163.5px;width:1px;height:56.5px;background:#efefef;"></div>
<div class="a" style="left:433.9px;top:105px;width:1px;height:57.5px;background:#e4f0f8;"></div>
<div class="a" style="left:433.9px;top:163.5px;width:1px;height:56.5px;background:#efefef;"></div>
<div class="a" style="left:466.9px;top:105px;width:1px;height:57.5px;background:#e4f0f8;"></div>
<div class="a" style="left:466.9px;top:163.5px;width:1px;height:56.5px;background:#efefef;"></div>
<div class="a" style="left:501.7px;top:105px;width:1px;height:57.5px;background:#e4f0f8;"></div>
<div class="a" style="left:501.7px;top:163.5px;width:1px;height:56.5px;background:#efefef;"></div>
<div class="a" style="left:607.4px;top:105px;width:1px;height:57.5px;background:#e4f0f8;"></div>
<div class="a" style="left:607.4px;top:163.5px;width:1px;height:56.5px;background:#efefef;"></div>
<div class="a" style="left:670.7px;top:105px;width:1px;height:57.5px;background:#e4f0f8;"></div>
<div class="a" style="left:670.7px;top:163.5px;width:1px;height:56.5px;background:#efefef;"></div>
<div class="a" style="left:730.5px;top:105px;width:1px;height:57.5px;background:#e4f0f8;"></div>
<div class="a" style="left:730.5px;top:163.5px;width:1px;height:56.5px;background:#efefef;"></div>
<div class="a" style="left:811.7px;top:105px;width:1px;height:57.5px;background:#e4f0f8;"></div>
<div class="a" style="left:811.7px;top:163.5px;width:1px;height:56.5px;background:#efefef;"></div>
<div class="a" style="left:822.8px;top:105px;width:1px;height:57.5px;background:#e4f0f8;"></div>
<div class="a" style="left:822.8px;top:163.5px;width:1px;height:56.5px;background:#efefef;"></div>
<div class="a" style="left:833.3px;top:105px;width:1px;height:57.5px;background:#e4f0f8;"></div>
<div class="a" style="left:833.3px;top:163.5px;width:1px;height:56.5px;background:#efefef;"></div>
<div class="a" style="left:843.9px;top:105px;width:1px;height:57.5px;background:#e4f0f8;"></div>
<div class="a" style="left:843.9px;top:163.5px;width:1px;height:56.5px;background:#efefef;"></div>
<div class="a" style="left:190px;top:162.5px;width:665px;height:1px;background:#eaeaea;"></div>
<div class="a" style="left:208.7px;top:91.50px;font-size:7.5px;line-height:10px;color:#333;font-weight:bold;">Miniatura</div>
<svg class="a" style="left:261.5px;top:92px;" width="9" height="9" viewBox="0 0 9 9"><circle cx="4" cy="4.5" r="3.6" fill="none" stroke="#555" stroke-width="0.8"/></svg>
<svg class="a" style="left:272px;top:91.5px;" width="9" height="10" viewBox="0 0 9 10"><path d="M0.5 0.5 H4.5 L7 3 V8.5 H0.5Z" fill="#fff" stroke="#555" stroke-width="0.8"/></svg>
<div class="a" style="left:286.5px;top:91.50px;font-size:7.5px;line-height:10px;color:#333;font-weight:bold;">Nazwa</div>
<svg class="a" style="left:361.5px;top:94.5px;" width="5" height="3" viewBox="0 0 5 3"><path d="M0 2.5 L2.25 0 L4.5 2.5Z" fill="#777"/></svg>
<div class="a" style="left:374.3px;top:91.50px;font-size:7.3px;line-height:10px;color:#333;font-weight:bold;">Numer części</div>
<div class="a" style="left:440.3px;top:91.50px;font-size:7.3px;line-height:10px;color:#333;font-weight:bold;">Wersja</div>
<div class="a" style="left:472.5px;top:91.50px;font-size:7.3px;line-height:10px;color:#333;font-weight:bold;">Zmiana</div>
<div class="a" style="left:506.2px;top:91.50px;font-size:7.3px;line-height:10px;color:#333;font-weight:bold;">Opis</div>
<div class="a" style="left:612.7px;top:91.50px;font-size:7.3px;line-height:10px;color:#333;font-weight:bold;">Materiał</div>
<div class="a" style="left:675.1px;top:91.50px;font-size:7.3px;line-height:10px;color:#333;font-weight:bold;">Stan</div>
<div class="a" style="left:735.2px;top:91.50px;font-size:7.3px;line-height:10px;color:#333;font-weight:bold;">Nazwa kategorii</div>
<svg class="a" style="left:812px;top:91px;" width="10" height="10" viewBox="0 0 10 10"><path d="M4.5 1 A3.5 3.5 0 1 0 8 5" fill="none" stroke="#777" stroke-width="0.8"/><circle cx="6.5" cy="3.5" r="2.3" fill="#f2c040"/></svg>
<svg class="a" style="left:823.5px;top:92px;" width="9" height="9" viewBox="0 0 9 9"><rect x="0.5" y="0.5" width="7.5" height="7.5" rx="1" fill="#fff" stroke="#666" stroke-width="0.8"/></svg>
<svg class="a" style="left:833.5px;top:91px;" width="10" height="10" viewBox="0 0 10 10"><path d="M1 1 H5 L9 5 L5 9 L1 5Z" fill="none" stroke="#777" stroke-width="0.8"/><circle cx="3.3" cy="3.3" r="0.8" fill="#777"/></svg>
<svg class="a" style="left:845px;top:91.5px;" width="9" height="9" viewBox="0 0 9 9"><rect x="0.5" y="0.5" width="8" height="8" fill="#ccc" stroke="#888" stroke-width="0.7"/><rect x="1.5" y="1.5" width="3" height="3" fill="#eee"/><rect x="5" y="5" width="2.5" height="2.5" fill="#999"/></svg>
<svg class="a" style="left:205.8px;top:163.5px;" width="54" height="56" viewBox="0 0 54 56"><rect width="54" height="56" fill="#c3c7d9"/><rect x="0" y="8.5" width="54" height="38.5" fill="#ecebd5"/><circle cx="13" cy="24" r="4" fill="none" stroke="#888" stroke-width="0.7"/><circle cx="13" cy="24" r="2" fill="none" stroke="#888" stroke-width="0.5"/><rect x="26" y="18" width="4" height="12" fill="none" stroke="#888" stroke-width="0.6"/><path d="M33 38 H52 V48 H33Z" fill="none" stroke="#888" stroke-width="0.5"/><path d="M35 42 H50 M40 38 V48" stroke="#999" stroke-width="0.4"/><path d="M2 8 H52" stroke="#aaa" stroke-width="0.4"/></svg>
<svg class="a" style="left:271.5px;top:129.5px;" width="10" height="9" viewBox="0 0 10 9"><rect x="0.5" y="0.5" width="5" height="7" fill="#5a7ab8"/><rect x="3.5" y="4" width="6" height="4.5" fill="#dfe6ee" stroke="#8a9aae" stroke-width="0.6"/></svg>
<div class="a" style="left:283.5px;top:129.00px;font-size:7.3px;line-height:10px;color:#3a3a3a;">39.44.00033.iam</div>
<div class="a" style="left:371.7px;top:129.00px;font-size:7.3px;line-height:10px;color:#3a3a3a;">39.44.00033</div>
<div class="a" style="left:449.5px;top:129.00px;font-size:7.3px;line-height:10px;color:#3a3a3a;">8</div>
<div class="a" style="left:482.8px;top:129.00px;font-size:7.3px;line-height:10px;color:#3a3a3a;">0</div>
<div class="a" style="left:504.5px;top:129.00px;font-size:7.3px;line-height:10px;color:#3a3a3a;">Zespół</div>
<div class="a" style="left:610.5px;top:129.00px;font-size:7.3px;line-height:10px;color:#3a3a3a;">Ogólny</div>
<div class="a" style="left:673px;top:129.00px;font-size:7.3px;line-height:10px;color:#3a3a3a;">Wydany</div>
<div class="a" style="left:733.1px;top:129.00px;font-size:7.3px;line-height:10px;color:#3a3a3a;">Produkcja własna</div>
<div class="a" style="left:824px;top:130px;width:8px;height:8px;background:#8fa9e0;border:1px solid #6a86c8;border-radius:2px;"></div>
<svg class="a" style="left:845px;top:129.5px;" width="9" height="9" viewBox="0 0 9 9"><rect x="0.5" y="0.5" width="8" height="8" fill="#cfcfcf" stroke="#999" stroke-width="0.7"/><rect x="1.5" y="1.5" width="3" height="3" fill="#eee"/><rect x="5" y="5" width="2.5" height="2.5" fill="#888"/></svg>
<svg class="a" style="left:271.5px;top:187.2px;" width="10" height="9" viewBox="0 0 10 9"><rect x="0.5" y="0.5" width="9" height="8" fill="#dfe6ee" stroke="#7a8aa0" stroke-width="0.7"/><rect x="5" y="4" width="4" height="4" fill="#5a7ab8"/></svg>
<div class="a" style="left:283.5px;top:186.70px;font-size:7.3px;line-height:10px;color:#3a3a3a;">39.44.00033.idw</div>
<div class="a" style="left:371.7px;top:186.70px;font-size:7.3px;line-height:10px;color:#3a3a3a;">39.44.00033</div>
<div class="a" style="left:449.5px;top:186.70px;font-size:7.3px;line-height:10px;color:#3a3a3a;">8</div>
<div class="a" style="left:482.8px;top:186.70px;font-size:7.3px;line-height:10px;color:#3a3a3a;">0</div>
<div class="a" style="left:504.5px;top:186.70px;font-size:7.3px;line-height:10px;color:#3a3a3a;">Zespół</div>
<div class="a" style="left:673px;top:186.70px;font-size:7.3px;line-height:10px;color:#3a3a3a;">Wydany</div>
<div class="a" style="left:733.1px;top:186.70px;font-size:7.3px;line-height:10px;color:#3a3a3a;">Produkcja własna</div>
<div class="a" style="left:824px;top:187.7px;width:8px;height:8px;background:#8fa9e0;border:1px solid #6a86c8;border-radius:2px;"></div>
<svg class="a" style="left:845px;top:187.2px;" width="9" height="9" viewBox="0 0 9 9"><rect x="0.5" y="0.5" width="8" height="8" fill="#cfcfcf" stroke="#999" stroke-width="0.7"/><rect x="1.5" y="1.5" width="3" height="3" fill="#eee"/><rect x="5" y="5" width="2.5" height="2.5" fill="#888"/></svg>
<div class="a" style="left:855px;top:105px;width:10px;height:115px;background:#f0f0f0;"></div>
<svg class="a" style="left:857px;top:108px;" width="6" height="4" viewBox="0 0 6 4"><path d="M0.5 3 L3 0.5 L5.5 3" fill="none" stroke="#c4c4c4" stroke-width="0.8"/></svg>
<div class="a" style="left:856px;top:119px;width:8px;height:9.5px;background:#cdcdcd;"></div>
<svg class="a" style="left:857px;top:213px;" width="6" height="4" viewBox="0 0 6 4"><path d="M0.5 0.5 L3 3 L5.5 0.5" fill="none" stroke="#c4c4c4" stroke-width="0.8"/></svg>
<div class="a" style="left:190px;top:220px;width:675px;height:1px;background:#e8e8e8;"></div>
<div class="a" style="left:187px;top:221px;width:679px;height:42.5px;background:#f2f2f2;"></div>
<div class="a" style="left:195px;top:227.60px;font-size:7.2px;line-height:10px;color:#3c3c3c;">Historia</div>
<div class="a" style="left:229.9px;top:227.60px;font-size:7.2px;line-height:10px;color:#3c3c3c;">Użycia</div>
<div class="a" style="left:259.8px;top:227.60px;font-size:7.2px;line-height:10px;color:#3c3c3c;">Gdzie używany</div>
<div class="a" style="left:317.9px;top:227.60px;font-size:7.2px;line-height:10px;color:#3c3c3c;">Zlecenie zmiany</div>
<div class="a" style="left:379.4px;top:227.60px;font-size:7.2px;line-height:10px;color:#3a9fd2;">Widok</div>
<div class="a" style="left:409.9px;top:227.60px;font-size:7.2px;line-height:10px;color:#3c3c3c;">CAD BOM</div>
<div class="a" style="left:453.4px;top:227.60px;font-size:7.2px;line-height:10px;color:#3c3c3c;">Arkusz danych</div>
<div class="a" style="left:224.2px;top:228px;width:0.8px;height:9px;background:#555;"></div>
<div class="a" style="left:254.8px;top:228px;width:0.8px;height:9px;background:#555;"></div>
<div class="a" style="left:312.9px;top:228px;width:0.8px;height:9px;background:#555;"></div>
<div class="a" style="left:373.7px;top:228px;width:0.8px;height:9px;background:#555;"></div>
<div class="a" style="left:405px;top:228px;width:0.8px;height:9px;background:#555;"></div>
<div class="a" style="left:448.5px;top:228px;width:0.8px;height:9px;background:#555;"></div>
<div class="a" style="left:193.3px;top:242.6px;width:131px;height:11.5px;background:#ffffff;"></div>
<div class="a" style="left:195px;top:243.30px;font-size:7.2px;line-height:10px;color:#333;">0</div>
<div class="a" style="left:219.9px;top:243.30px;font-size:7.2px;line-height:10px;color:#333;">Wydany</div>
<svg class="a" style="left:320px;top:247.3px;" width="4" height="3" viewBox="0 0 4 3"><path d="M0 0 L3.5 0 L1.75 2.2 Z" fill="#888"/></svg>
<div class="a" style="left:719.4px;top:241.2px;width:57.5px;height:18.6px;background:#f5f5f5;border:1px solid #c6c6c6;"></div>
<div class="a" style="left:731.5px;top:245.50px;font-size:7.2px;line-height:10px;color:#333;">Wyświetl...</div>
<div class="a" style="left:781px;top:241.2px;width:81px;height:18.6px;background:#f5f5f5;border:1px solid #c6c6c6;"></div>
<div class="a" style="left:853.5px;top:241.2px;width:1px;height:18.6px;background:#c6c6c6;"></div>
<div class="a" style="left:799px;top:245.50px;font-size:7.2px;line-height:10px;color:#333;">Aktualizuj...</div>
<svg class="a" style="left:856.5px;top:249.5px;" width="4" height="3" viewBox="0 0 4 3"><path d="M0 0 L3.5 0 L1.75 2.2 Z" fill="#666"/></svg>
<div class="a" style="left:193px;top:263.5px;width:669px;height:268px;background:#ffffff;"></div>
<div class="a" style="left:193px;top:263.5px;width:669px;height:1px;background:#6a6a6a;"></div>
<div class="a" style="left:193px;top:263.5px;width:1px;height:268px;background:#6a6a6a;"></div>
<div class="a" style="left:194px;top:264.5px;width:656px;height:258.5px;background:#808080;"></div>
<div class="a" style="left:858px;top:264.5px;width:4px;height:267px;background:#f2f2f2;"></div>
<div class="a" style="left:193px;top:531.5px;width:673px;height:2px;background:#e8e8e8;"></div>
<div class="a" style="left:866px;top:68px;width:158px;height:466px;background:#f0f0f0;"></div>
<div class="a" style="left:866.5px;top:68px;width:1px;height:466px;background:#d6d6d6;"></div>
<div class="a" style="left:872.8px;top:74.70px;font-size:9.0px;line-height:10px;color:#454545;">Właściwości</div>
<svg class="a" style="left:993px;top:75px;" width="6" height="8" viewBox="0 0 6 8"><path d="M1 0.5 H5 M2 0.5 V4 M4 0.5 V4 M0.5 4.5 H5.5 M3 4.5 V7.5" stroke="#777" stroke-width="0.8" fill="none"/></svg>
<svg class="a" style="left:1012px;top:76px;" width="7" height="7" viewBox="0 0 7 7"><path d="M0.5 0.5 L6 6 M6 0.5 L0.5 6" stroke="#666" stroke-width="0.9"/></svg>
<div class="a" style="left:871px;top:91.4px;width:86.5px;height:12.5px;background:#ffffff;"></div>
<div class="a" style="left:872.5px;top:92.90px;font-size:7.4px;line-height:10px;color:#333;">39.44.00033.iam</div>
<svg class="a" style="left:952px;top:97px;" width="4" height="3" viewBox="0 0 4 3"><path d="M0 0 L3.5 0 L1.75 2.2 Z" fill="#777"/></svg>
<div class="a" style="left:966.5px;top:97px;width:9.5px;height:2.5px;background:#b9b9b9;"></div>
<svg class="a" style="left:982px;top:92.5px;" width="11" height="11" viewBox="0 0 11 11"><path d="M3.8 0.5 H7.2 V3.8 H10.5 V7.2 H7.2 V10.5 H3.8 V7.2 H0.5 V3.8 H3.8Z" fill="#1a73d8" stroke="#0e55a8" stroke-width="0.6"/></svg>
<svg class="a" style="left:1001px;top:92px;" width="11" height="12" viewBox="0 0 11 12"><path d="M1 10.5 L2 7.5 L8.5 1 L10.5 3 L4 9.5Z" fill="#f0c850" stroke="#8a6a20" stroke-width="0.7"/><path d="M1 10.5 L2 7.5 L4 9.5Z" fill="#e8d8b0"/></svg>
<svg class="a" style="left:1018px;top:97px;" width="4" height="3" viewBox="0 0 4 3"><path d="M0 0 L3.5 0 L1.75 2.2 Z" fill="#333"/></svg>
<div class="a" style="left:870px;top:109px;width:151px;height:278px;background:#ffffff;"></div>
<div class="a" style="left:870px;top:109px;width:142px;height:18px;background:#dcecf8;"></div>
<svg class="a" style="left:876.5px;top:116px;" width="5" height="4" viewBox="0 0 5 4"><path d="M0 0 L4.5 0 L2.25 3.2Z" fill="#7a8aa0"/></svg>
<div class="a" style="left:889.6px;top:113.30px;font-size:7.6px;line-height:10px;color:#2f2f2f;font-weight:bold;">System</div>
<div class="a" style="left:872.1px;top:129.20px;font-size:7.2px;line-height:10px;color:#444;">Data 1. wyd.</div>
<div class="a" style="left:942.9px;top:129.20px;font-size:7.2px;line-height:10px;color:#444;">03.10.2023 13:31</div>
<div class="a" style="left:870px;top:141.0px;width:142px;height:1px;background:#ececec;"></div>
<div class="a" style="left:872.1px;top:143.70px;font-size:7.2px;line-height:10px;color:#444;">Data modyfikacji</div>
<div class="a" style="left:942.9px;top:143.70px;font-size:7.2px;line-height:10px;color:#444;">03.10.2023 13:39</div>
<div class="a" style="left:870px;top:155.5px;width:142px;height:1px;background:#ececec;"></div>
<div class="a" style="left:872.1px;top:158.20px;font-size:7.2px;line-height:10px;color:#444;">Data utworz. wer.</div>
<div class="a" style="left:942.9px;top:158.20px;font-size:7.2px;line-height:10px;color:#444;">03.10.2023 13:39</div>
<div class="a" style="left:870px;top:170.0px;width:142px;height:1px;background:#ececec;"></div>
<div class="a" style="left:872.1px;top:172.70px;font-size:7.2px;line-height:10px;color:#444;">Definicja cyklu roz...</div>
<div class="a" style="left:942.9px;top:172.70px;font-size:7.2px;line-height:10px;color:#444;">PROCAD Dokume...</div>
<div class="a" style="left:870px;top:184.5px;width:142px;height:1px;background:#ececec;"></div>
<div class="a" style="left:872.1px;top:187.20px;font-size:7.2px;line-height:10px;color:#444;">Definicja cyklu roz...</div>
<div class="a" style="left:942.9px;top:187.20px;font-size:7.2px;line-height:10px;color:#444;">PROCAD Dokume...</div>
<div class="a" style="left:870px;top:199.0px;width:142px;height:1px;background:#ececec;"></div>
<div class="a" style="left:872.1px;top:201.70px;font-size:7.2px;line-height:10px;color:#444;">Dostawca</div>
<div class="a" style="left:942.9px;top:201.70px;font-size:7.2px;line-height:10px;color:#444;">Inventor</div>
<div class="a" style="left:870px;top:213.5px;width:142px;height:1px;background:#ececec;"></div>
<div class="a" style="left:872.1px;top:216.20px;font-size:7.2px;line-height:10px;color:#444;">Element z możliwo...</div>
<div class="a" style="left:942.9px;top:216.20px;font-size:7.2px;line-height:10px;color:#444;">True</div>
<div class="a" style="left:870px;top:228.0px;width:142px;height:1px;background:#ececec;"></div>
<div class="a" style="left:872.1px;top:230.70px;font-size:7.2px;line-height:10px;color:#444;">Has Markup</div>
<div class="a" style="left:942.9px;top:230.70px;font-size:7.2px;line-height:10px;color:#444;">False</div>
<div class="a" style="left:870px;top:242.5px;width:142px;height:1px;background:#ececec;"></div>
<div class="a" style="left:872.1px;top:245.20px;font-size:7.2px;line-height:10px;color:#444;">Has Markup (Hist...</div>
<div class="a" style="left:942.9px;top:245.20px;font-size:7.2px;line-height:10px;color:#444;">False</div>
<div class="a" style="left:870px;top:257.0px;width:142px;height:1px;background:#ececec;"></div>
<div class="a" style="left:872.1px;top:259.70px;font-size:7.2px;line-height:10px;color:#444;">Has Model State</div>
<div class="a" style="left:942.9px;top:259.70px;font-size:7.2px;line-height:10px;color:#444;">False</div>
<div class="a" style="left:870px;top:271.5px;width:142px;height:1px;background:#ececec;"></div>
<div class="a" style="left:872.1px;top:274.20px;font-size:7.2px;line-height:10px;color:#444;">Is Table Driven</div>
<div class="a" style="left:942.9px;top:274.20px;font-size:7.2px;line-height:10px;color:#444;">False</div>
<div class="a" style="left:870px;top:286.0px;width:142px;height:1px;background:#ececec;"></div>
<div class="a" style="left:872.1px;top:288.70px;font-size:7.2px;line-height:10px;color:#444;">Is True Model State</div>
<div class="a" style="left:942.9px;top:288.70px;font-size:7.2px;line-height:10px;color:#444;">False</div>
<div class="a" style="left:870px;top:300.5px;width:142px;height:1px;background:#ececec;"></div>
<div class="a" style="left:872.1px;top:303.20px;font-size:7.2px;line-height:10px;color:#444;">Klasyfikacja</div>
<div class="a" style="left:942.9px;top:303.20px;font-size:7.2px;line-height:10px;color:#444;">Brak</div>
<div class="a" style="left:870px;top:315.0px;width:142px;height:1px;background:#ececec;"></div>
<div class="a" style="left:872.1px;top:317.70px;font-size:7.2px;line-height:10px;color:#444;">Komentarz</div>
<div class="a" style="left:942.9px;top:317.70px;font-size:7.2px;line-height:10px;color:#444;">Właściwości zsync...</div>
<div class="a" style="left:870px;top:329.5px;width:142px;height:1px;background:#ececec;"></div>
<div class="a" style="left:872.1px;top:332.20px;font-size:7.2px;line-height:10px;color:#444;">Kontr. przez zlec. z...</div>
<div class="a" style="left:942.9px;top:332.20px;font-size:7.2px;line-height:10px;color:#444;">False</div>
<div class="a" style="left:870px;top:344.0px;width:142px;height:1px;background:#ececec;"></div>
<div class="a" style="left:872.1px;top:346.70px;font-size:7.2px;line-height:10px;color:#444;">Latest Approver</div>
<div class="a" style="left:942.9px;top:346.70px;font-size:7.2px;line-height:10px;color:#444;">Administrator</div>
<div class="a" style="left:870px;top:358.5px;width:142px;height:1px;background:#ececec;"></div>
<div class="a" style="left:872.1px;top:361.20px;font-size:7.2px;line-height:10px;color:#444;">Latest Released D...</div>
<div class="a" style="left:942.9px;top:361.20px;font-size:7.2px;line-height:10px;color:#444;">03.10.2023 13:35</div>
<div class="a" style="left:870px;top:373.0px;width:142px;height:1px;background:#ececec;"></div>
<div class="a" style="left:872.1px;top:375.70px;font-size:7.2px;line-height:10px;color:#444;">Liczba załączników</div>
<div class="a" style="left:942.9px;top:375.70px;font-size:7.2px;line-height:10px;color:#444;">0</div>
<div class="a" style="left:870px;top:387.5px;width:142px;height:1px;background:#ececec;"></div>
<div class="a" style="left:940.6px;top:127px;width:1px;height:261px;background:#ececec;"></div>
<div class="a" style="left:870px;top:109px;width:1px;height:278px;background:#e2e2e2;"></div>
<div class="a" style="left:1012px;top:109px;width:9px;height:278px;background:#f0f0f0;"></div>
<svg class="a" style="left:1014px;top:112px;" width="6" height="4" viewBox="0 0 6 4"><path d="M0.5 3 L3 0.5 L5.5 3" fill="none" stroke="#c4c4c4" stroke-width="0.8"/></svg>
<div class="a" style="left:1012.5px;top:120.3px;width:8px;height:32.5px;background:#cdcdcd;"></div>
<svg class="a" style="left:1014px;top:380px;" width="6" height="4" viewBox="0 0 6 4"><path d="M0.5 0.5 L3 3 L5.5 0.5" fill="none" stroke="#c4c4c4" stroke-width="0.8"/></svg>
<svg class="a" style="left:884.7px;top:392.3px;" width="121.5" height="121.3" viewBox="0 0 121.5 121.3"><defs><radialGradient id="pg" cx="0.5" cy="0.4" r="0.8"><stop offset="0" stop-color="#e2e4ec"/><stop offset="1" stop-color="#bfc4d8"/></radialGradient></defs><rect width="121.5" height="121.3" fill="url(#pg)"/><path d="M26.4 73 L31.9 67.3 L46 66 L57 47 L65.9 49.8 L76.9 44.3 L85.6 53.1 L85.6 66.2 L84.5 70 Q80 69 78.5 73 Q79 75.5 80.2 76.1 Q76 86 69.2 90.4 L52.7 94.8 Q46 93 41.8 89.3 Q30 82 26.4 75Z" fill="#4f3592"/><path d="M65.9 49.8 L76.9 44.3 L85.6 53.1 L78 57.4Z" fill="#6446a8"/><path d="M78 57.4 L85.6 53.1 L85.6 66.2 L84.5 70 L79 68Z" fill="#543a96"/><path d="M26.4 73 L31.9 67.3 L47.2 69.5 L43 76.5Z" fill="#6244a6"/><path d="M43 76.5 L47.2 69.5 L58 75 L56 82Z" fill="#5a3e9e"/><path d="M62.6 49.8 Q53 58 52.7 69.5 L58 74 Q68 70 72.5 56.4Z" fill="#6d4eb6"/><path d="M58.2 46.5 Q46 55 45 70.6 L52.7 69.5 Q53 58 62.6 49.8Z" fill="#c3c1cb"/><path d="M72.5 56.4 L79 58.5 Q76 75 62 79 L54 77 L58 73.9 Q69 70 72.5 56.4Z" fill="#bab8c2"/><path d="M46 86 L51.6 85 L51.6 92 L46 92.6Z" fill="#6244a6"/><path d="M30.8 61 L35 60.2 L37 64 L32 65.5Z" fill="#8f8c9a"/></svg>
<svg class="a" style="left:205.8px;top:106.4px;" width="54" height="55.5" viewBox="0 0 54 55.5"><defs><linearGradient id="tg1" x1="0" y1="0" x2="0" y2="1"><stop offset="0" stop-color="#bfc3d8"/><stop offset="1" stop-color="#dadde8"/></linearGradient></defs><rect width="54" height="55.5" fill="url(#tg1)"/><g transform="translate(-1.7 -0.6) scale(0.47)"><path d="M26.4 73 L31.9 67.3 L46 66 L57 47 L65.9 49.8 L76.9 44.3 L85.6 53.1 L85.6 66.2 L84.5 70 Q80 69 78.5 73 Q79 75.5 80.2 76.1 Q76 86 69.2 90.4 L52.7 94.8 Q46 93 41.8 89.3 Q30 82 26.4 75Z" fill="#4f3592"/><path d="M65.9 49.8 L76.9 44.3 L85.6 53.1 L78 57.4Z" fill="#6446a8"/><path d="M78 57.4 L85.6 53.1 L85.6 66.2 L84.5 70 L79 68Z" fill="#543a96"/><path d="M26.4 73 L31.9 67.3 L47.2 69.5 L43 76.5Z" fill="#6244a6"/><path d="M43 76.5 L47.2 69.5 L58 75 L56 82Z" fill="#5a3e9e"/><path d="M62.6 49.8 Q53 58 52.7 69.5 L58 74 Q68 70 72.5 56.4Z" fill="#6d4eb6"/><path d="M58.2 46.5 Q46 55 45 70.6 L52.7 69.5 Q53 58 62.6 49.8Z" fill="#c3c1cb"/><path d="M72.5 56.4 L79 58.5 Q76 75 62 79 L54 77 L58 73.9 Q69 70 72.5 56.4Z" fill="#bab8c2"/><path d="M46 86 L51.6 85 L51.6 92 L46 92.6Z" fill="#6244a6"/><path d="M30.8 61 L35 60.2 L37 64 L32 65.5Z" fill="#8f8c9a"/></g></svg>
<div class="a" style="left:866px;top:513.5px;width:158px;height:20px;background:#f0f0f0;"></div>
<div class="a" style="left:869px;top:513.5px;width:49.5px;height:19px;background:#f8f8f8;border:1px solid #d8d8d8;border-bottom:none;"></div>
<div class="a" style="left:875px;top:518.60px;font-size:7.2px;line-height:10px;color:#3a9fd2;">Właściwości</div>
<div class="a" style="left:924.3px;top:518.60px;font-size:7.5px;line-height:10px;color:#3c3c3c;">Widoki udostępnione</div>
<div class="a" style="left:998.5px;top:516px;width:1px;height:14px;background:#cfcfcf;"></div>
<div class="a" style="left:0px;top:534.5px;width:1024px;height:13px;background:#ececec;"></div>
<div class="a" style="left:0px;top:534.5px;width:1024px;height:1px;background:#dadada;"></div>
<div class="a" style="left:2px;top:537.50px;font-size:7.4px;line-height:10px;color:#333;">45 Obiekty (1 wybranych)</div>
<div class="a" style="left:907px;top:537.50px;font-size:7.2px;line-height:10px;color:#333;">localhost</div>
<div class="a" style="left:939.3px;top:535.5px;width:1px;height:11px;background:#cfcfcf;"></div>
<div class="a" style="left:943px;top:537.50px;font-size:7.2px;line-height:10px;color:#333;">PDM</div>
<div class="a" style="left:961.7px;top:535.5px;width:1px;height:11px;background:#cfcfcf;"></div>
<svg class="a" style="left:965.5px;top:536px;" width="12" height="10" viewBox="0 0 12 10"><circle cx="4" cy="3" r="2.3" fill="none" stroke="#555" stroke-width="0.8"/><path d="M0.5 9.5 Q4 5 7.5 9.5" fill="none" stroke="#555" stroke-width="0.8"/><rect x="6.5" y="5.5" width="5" height="4" fill="none" stroke="#555" stroke-width="0.7"/></svg>
<div class="a" style="left:978.4px;top:537.50px;font-size:7.4px;line-height:10px;color:#333;">Administrator</div>
<svg class="a" style="left:0;top:0" width="1024" height="547" viewBox="0 0 1024 547"><defs><clipPath id="vc"><rect x="194" y="264.5" width="656" height="258.5"/></clipPath><linearGradient id="side" x1="0" y1="0" x2="1" y2="0"><stop offset="0" stop-color="#6a4bb0"/><stop offset="1" stop-color="#533796"/></linearGradient><linearGradient id="ringg" x1="0" y1="0" x2="1" y2="1"><stop offset="0" stop-color="#d6d6d6"/><stop offset="1" stop-color="#b4b4b4"/></linearGradient><filter id="sh" x="-20%" y="-20%" width="140%" height="160%"><feGaussianBlur stdDeviation="2"/></filter></defs><g clip-path="url(#vc)"><path d="M636.0 296.5 C639.3 298.2 650.3 301.4 656.0 307.0 C661.7 312.6 666.5 321.2 670.0 330.0 C673.5 338.8 676.0 350.0 677.0 360.0 C678.0 370.0 677.5 381.2 676.0 390.0 C674.5 398.8 673.2 407.0 668.0 413.0 C662.8 419.0 648.8 423.8 645.0 426.0 L633 424 L633 410 L631 390 L629 360 L626 330 L620 311 L611 300Z" fill="#b3b3b3"/><path d="M615.5 299.4 C617.3 301.2 623.4 305.2 626.5 310.3 C629.5 315.4 632.1 321.7 633.9 330.0 C635.8 338.3 636.8 350.0 637.6 360.0 C638.5 370.0 638.8 381.6 639.1 390.0 C639.4 398.4 640.0 404.8 639.3 410.5 C638.6 416.3 635.8 422.1 635.2 424.4" fill="none" stroke="#c2c2c2" stroke-width="4"/><path d="M620.5 298.7 C622.7 300.5 630.0 304.3 633.7 309.5 C637.4 314.7 640.5 321.6 642.7 330.0 C645.0 338.4 646.3 350.0 647.2 360.0 C648.1 370.0 648.3 381.5 648.1 390.0 C647.9 398.5 648.1 405.3 646.3 411.1 C644.5 416.9 639.0 422.5 637.6 424.8" fill="none" stroke="#8a8a8a" stroke-width="1"/><path d="M623.2 298.3 C625.6 300.1 633.6 303.8 637.6 309.0 C641.7 314.3 645.1 321.5 647.6 330.0 C650.0 338.5 651.6 350.0 652.5 360.0 C653.4 370.0 653.4 381.4 653.0 390.0 C652.7 398.6 652.5 405.6 650.1 411.5 C647.8 417.3 640.8 422.7 638.9 425.0" fill="none" stroke="#262626" stroke-width="3.2"/><path d="M626.8 297.8 C629.4 299.6 638.2 303.1 642.7 308.5 C647.2 313.8 651.0 321.4 653.7 330.0 C656.5 338.6 658.3 350.0 659.2 360.0 C660.2 370.0 660.0 381.4 659.4 390.0 C658.7 398.6 658.2 406.0 655.0 411.9 C651.9 417.8 643.0 423.0 640.6 425.3" fill="none" stroke="#bdbdbd" stroke-width="2.5"/><path d="M629.0 297.5 C631.8 299.3 641.1 302.7 645.9 308.1 C650.7 313.5 654.7 321.4 657.7 330.0 C660.6 338.6 662.6 350.0 663.6 360.0 C664.5 370.0 664.3 381.3 663.4 390.0 C662.5 398.7 661.8 406.3 658.2 412.2 C654.6 418.1 644.4 423.2 641.6 425.4" fill="none" stroke="#8e8e8e" stroke-width="0.9"/><path d="M631.0 297.2 C634.0 299.0 643.8 302.3 648.8 307.8 C653.8 313.3 658.1 321.3 661.2 330.0 C664.3 338.7 666.4 350.0 667.4 360.0 C668.4 370.0 668.1 381.3 667.0 390.0 C665.9 398.7 665.1 406.5 661.0 412.4 C656.9 418.3 645.7 423.4 642.6 425.6" fill="none" stroke="#bababa" stroke-width="2"/><path d="M633.0 296.9 C636.1 298.7 646.4 302.0 651.7 307.5 C657.0 313.0 661.5 321.2 664.7 330.0 C668.0 338.8 670.3 350.0 671.2 360.0 C672.2 370.0 671.8 381.2 670.6 390.0 C669.4 398.8 668.3 406.7 663.8 412.6 C659.3 418.6 646.9 423.6 643.6 425.8" fill="none" stroke="#909090" stroke-width="0.9"/><path d="M635.8 296.5 C639.1 298.3 650.0 301.5 655.6 307.0 C661.3 312.6 666.1 321.2 669.6 330.0 C673.0 338.8 675.5 350.0 676.5 360.0 C677.5 370.0 677.0 381.2 675.5 390.0 C674.1 398.8 672.8 407.0 667.6 413.0 C662.5 419.0 648.7 423.8 644.9 426.0" fill="none" stroke="#9a9a9a" stroke-width="0.8"/><path d="M606 303 L614 299 L626 302 L622 309 L610 310Z" fill="#d2d2d2"/><path d="M609 311 L621 309 L619 315 L609 315Z" fill="#6e6e6e"/><defs><linearGradient id="rf" x1="0" y1="0" x2="0" y2="1"><stop offset="0" stop-color="#6748ac"/><stop offset="0.55" stop-color="#5a3d9d"/><stop offset="1" stop-color="#4d348e"/></linearGradient></defs><path d="M571 320 L618.7 316.5 Q631 328 633 360 L634.5 380 Q635 405 631.7 423.8 L628.5 445.6 L621.5 461 L604.8 465.4 L572.8 467.4 Q584 440 584.3 420 Q583 360 571 320Z" fill="url(#rf)"/><path d="M580.2 328 Q606 326 628.0 329" stroke="#563a98" stroke-width="0.5" fill="none" opacity="0.5"/><path d="M580.4 333 Q606 331 628.0 334" stroke="#563a98" stroke-width="0.5" fill="none" opacity="0.5"/><path d="M580.5 338 Q606 336 628.0 339" stroke="#563a98" stroke-width="0.5" fill="none" opacity="0.5"/><path d="M580.7 343 Q606 341 628.0 344" stroke="#563a98" stroke-width="0.5" fill="none" opacity="0.5"/><path d="M580.8 348 Q606 346 628.0 349" stroke="#563a98" stroke-width="0.5" fill="none" opacity="0.5"/><path d="M581.0 353 Q606 351 628.0 354" stroke="#563a98" stroke-width="0.5" fill="none" opacity="0.5"/><path d="M581.1 358 Q606 356 628.0 359" stroke="#563a98" stroke-width="0.5" fill="none" opacity="0.5"/><path d="M581.3 363 Q606 361 628.0 364" stroke="#563a98" stroke-width="0.5" fill="none" opacity="0.5"/><path d="M581.4 368 Q606 366 628.0 369" stroke="#563a98" stroke-width="0.5" fill="none" opacity="0.5"/><path d="M581.6 373 Q606 371 628.0 374" stroke="#563a98" stroke-width="0.5" fill="none" opacity="0.5"/><path d="M581.7 378 Q606 376 628.0 379" stroke="#563a98" stroke-width="0.5" fill="none" opacity="0.5"/><path d="M581.9 383 Q606 381 628.0 384" stroke="#563a98" stroke-width="0.5" fill="none" opacity="0.5"/><path d="M582.0 388 Q606 386 628.0 389" stroke="#563a98" stroke-width="0.5" fill="none" opacity="0.5"/><path d="M582.2 393 Q606 391 628.0 394" stroke="#563a98" stroke-width="0.5" fill="none" opacity="0.5"/><path d="M582.3 398 Q606 396 628.0 399" stroke="#563a98" stroke-width="0.5" fill="none" opacity="0.5"/><path d="M582.5 403 Q606 401 628.0 404" stroke="#563a98" stroke-width="0.5" fill="none" opacity="0.5"/><path d="M582.6 408 Q606 406 628.0 409" stroke="#563a98" stroke-width="0.5" fill="none" opacity="0.5"/><path d="M582.8 413 Q606 411 628.0 414" stroke="#563a98" stroke-width="0.5" fill="none" opacity="0.5"/><path d="M582.9 418 Q606 416 628.0 419" stroke="#563a98" stroke-width="0.5" fill="none" opacity="0.5"/><path d="M583.1 423 Q606 421 628.0 424" stroke="#563a98" stroke-width="0.5" fill="none" opacity="0.5"/><path d="M583.2 428 Q606 426 628.0 429" stroke="#563a98" stroke-width="0.5" fill="none" opacity="0.5"/><path d="M583.4 433 Q606 431 627.2 434" stroke="#563a98" stroke-width="0.5" fill="none" opacity="0.5"/><path d="M583.5 438 Q606 436 626.0 439" stroke="#563a98" stroke-width="0.5" fill="none" opacity="0.5"/><path d="M583.7 443 Q606 441 624.8 444" stroke="#563a98" stroke-width="0.5" fill="none" opacity="0.5"/><path d="M583.8 448 Q606 446 623.5 449" stroke="#563a98" stroke-width="0.5" fill="none" opacity="0.5"/><path d="M584.0 453 Q606 451 622.2 454" stroke="#563a98" stroke-width="0.5" fill="none" opacity="0.5"/><ellipse cx="506" cy="384" rx="70" ry="82" transform="rotate(-8 506 384)" fill="#6446a8"/><path d="M470 300 L482 296 L500 300 L545.8 280.5 L559 303.3 L571 320 Q583 360 584.3 420 Q584 440 572.8 467.4 L546.5 460 L508.5 454 L485 446 Q466 430 460 400 L458.8 314.7Z" fill="#6a4aad"/><path d="M491 449.8 L546.5 459 L572.8 467.4 L604.8 465.4 L610 477.6 L608.6 482 L572.8 485.5 L487 484 Z" fill="#6646aa"/><path d="M572.8 467.4 L604.8 465.4 L610 477.6 L574 478Z" fill="#5e42a3"/><path d="M458.8 314.7 L466.7 296.3 L481.6 295.4 L485.2 313 L472 332 L460 330Z" fill="#6244a6"/><path d="M476.4 281.3 L494.8 268.2 L545.8 280.5 L559 303.3 L555.5 335.8 Q540 312 515 306 Q498 305 485.2 313Z" fill="#6f50b3"/><path d="M545.8 280.5 L494.8 268.2 L608.2 293.6 L609 299 L559 303.3Z" fill="#5d40a2"/><path d="M494.8 268.2 L608.2 293.6" stroke="#8a78b8" stroke-width="0.7"/><path d="M559 303.3 L609 299 L606 308 L604 317 L571 320 L556 336Z" fill="#4a3190"/><path d="M559 303.3 L555.5 335.8 L571 320Z" fill="#5c3fa0"/><ellipse cx="525" cy="382" rx="38" ry="78" transform="rotate(-10 525 382)" fill="#5d40a0" stroke="#7b5ec0" stroke-width="1.2" /><ellipse cx="523" cy="383" rx="34" ry="73" transform="rotate(-10 523 383)" fill="#573b9a" stroke="#4f3692" stroke-width="3" /><ellipse cx="520" cy="385" rx="29" ry="64" transform="rotate(-10 520 385)" fill="#6446a8" stroke="#7052b6" stroke-width="1" /><ellipse cx="517" cy="387" rx="23" ry="56" transform="rotate(-10 517 387)" fill="#583c9b" stroke="#4d3490" stroke-width="1.5" /><ellipse cx="522" cy="386" rx="19" ry="50" transform="rotate(-10 522 386)" fill="none" stroke="#6a4cae" stroke-width="1" /><path d="M512.7 388.5 L529 386" stroke="#d8d8d8" stroke-width="2.4" stroke-linecap="round"/><mask id="rm1" maskUnits="userSpaceOnUse" x="0" y="0" width="1024" height="547"><g transform="rotate(-9 473 381)"><ellipse cx="473" cy="381" rx="26" ry="57.5" fill="#fff"/><ellipse cx="481" cy="381" rx="26" ry="57.5" fill="#000"/></g></mask><g mask="url(#rm1)"><rect x="435" y="311.5" width="76" height="139.0" fill="#a2a2a2"/></g><ellipse cx="481" cy="381" rx="26" ry="57.5" transform="rotate(-9 481 381)" fill="none" stroke="#8e8e8e" stroke-width="0.6" mask="url(#rm1b)"/><path d="M440 381 A33 64.5 0 1 0 506 381 A33 64.5 0 1 0 440 381Z M447 381 A26 57.5 0 1 0 499 381 A26 57.5 0 1 0 447 381Z" fill="#bdbdbd" fill-rule="evenodd" stroke="#9a9a9a" stroke-width="0.7" transform="rotate(-9 473 381)"/><ellipse cx="466" cy="382" rx="32.5" ry="65.5" transform="rotate(-9 466 382)" fill="none" stroke="#1c1c1c" stroke-width="2.2" /><mask id="rm2" maskUnits="userSpaceOnUse" x="0" y="0" width="1024" height="547"><g transform="rotate(-9 453 384)"><ellipse cx="453" cy="384" rx="26" ry="57" fill="#fff"/><ellipse cx="462" cy="384" rx="26" ry="57" fill="#000"/></g></mask><g mask="url(#rm2)"><rect x="416" y="316" width="74" height="136" fill="#adadad"/></g><ellipse cx="462" cy="384" rx="26" ry="57" transform="rotate(-9 462 384)" fill="none" stroke="#8e8e8e" stroke-width="0.6" mask="url(#rm2b)"/><path d="M421 384 A32 63 0 1 0 485 384 A32 63 0 1 0 421 384Z M427 384 A26 57 0 1 0 479 384 A26 57 0 1 0 427 384Z" fill="#c6c6c6" fill-rule="evenodd" stroke="#9a9a9a" stroke-width="0.7" transform="rotate(-9 453 384)"/><ellipse cx="450" cy="385" rx="30.5" ry="63" transform="rotate(-9 450 385)" fill="none" stroke="#1c1c1c" stroke-width="2.4" /><mask id="rm3" maskUnits="userSpaceOnUse" x="0" y="0" width="1024" height="547"><g transform="rotate(-8 426 387)"><ellipse cx="426" cy="387" rx="30" ry="55" fill="#fff"/><ellipse cx="440" cy="387" rx="30" ry="55" fill="#000"/></g></mask><g mask="url(#rm3)"><rect x="382" y="318" width="88" height="138" fill="#a0a0a0"/><path d="M387 332 L426 334" stroke="#b8b8b8" stroke-width="0.7"/><path d="M387 335 L426 337" stroke="#b8b8b8" stroke-width="0.7"/><path d="M387 338 L426 340" stroke="#b8b8b8" stroke-width="0.7"/><path d="M387 341 L426 343" stroke="#b8b8b8" stroke-width="0.7"/><path d="M387 344 L426 346" stroke="#b8b8b8" stroke-width="0.7"/><path d="M387 347 L426 349" stroke="#b8b8b8" stroke-width="0.7"/><path d="M387 350 L426 352" stroke="#b8b8b8" stroke-width="0.7"/><path d="M387 353 L426 355" stroke="#b8b8b8" stroke-width="0.7"/><path d="M387 356 L426 358" stroke="#b8b8b8" stroke-width="0.7"/><path d="M387 359 L426 361" stroke="#b8b8b8" stroke-width="0.7"/><path d="M387 362 L426 364" stroke="#b8b8b8" stroke-width="0.7"/><path d="M387 365 L426 367" stroke="#b8b8b8" stroke-width="0.7"/><path d="M387 368 L426 370" stroke="#b8b8b8" stroke-width="0.7"/><path d="M387 371 L426 373" stroke="#b8b8b8" stroke-width="0.7"/><path d="M387 374 L426 376" stroke="#b8b8b8" stroke-width="0.7"/><path d="M387 377 L426 379" stroke="#b8b8b8" stroke-width="0.7"/><path d="M387 380 L426 382" stroke="#b8b8b8" stroke-width="0.7"/><path d="M387 383 L426 385" stroke="#b8b8b8" stroke-width="0.7"/><path d="M387 386 L426 388" stroke="#b8b8b8" stroke-width="0.7"/><path d="M387 389 L426 391" stroke="#b8b8b8" stroke-width="0.7"/><path d="M387 392 L426 394" stroke="#b8b8b8" stroke-width="0.7"/><path d="M387 395 L426 397" stroke="#b8b8b8" stroke-width="0.7"/><path d="M387 398 L426 400" stroke="#b8b8b8" stroke-width="0.7"/><path d="M387 401 L426 403" stroke="#b8b8b8" stroke-width="0.7"/><path d="M387 404 L426 406" stroke="#b8b8b8" stroke-width="0.7"/><path d="M387 407 L426 409" stroke="#b8b8b8" stroke-width="0.7"/><path d="M387 410 L426 412" stroke="#b8b8b8" stroke-width="0.7"/><path d="M387 413 L426 415" stroke="#b8b8b8" stroke-width="0.7"/><path d="M387 416 L426 418" stroke="#b8b8b8" stroke-width="0.7"/><path d="M387 419 L426 421" stroke="#b8b8b8" stroke-width="0.7"/><path d="M387 422 L426 424" stroke="#b8b8b8" stroke-width="0.7"/><path d="M387 425 L426 427" stroke="#b8b8b8" stroke-width="0.7"/><path d="M387 428 L426 430" stroke="#b8b8b8" stroke-width="0.7"/><path d="M387 431 L426 433" stroke="#b8b8b8" stroke-width="0.7"/><path d="M387 434 L426 436" stroke="#b8b8b8" stroke-width="0.7"/><path d="M387 437 L426 439" stroke="#b8b8b8" stroke-width="0.7"/><path d="M387 440 L426 442" stroke="#b8b8b8" stroke-width="0.7"/></g><ellipse cx="440" cy="387" rx="30" ry="55" transform="rotate(-8 440 387)" fill="none" stroke="#8e8e8e" stroke-width="0.6" mask="url(#rm3b)"/><path d="M387 387 A39 64 0 1 0 465 387 A39 64 0 1 0 387 387Z M396 387 A30 55 0 1 0 456 387 A30 55 0 1 0 396 387Z" fill="#c9c9c9" fill-rule="evenodd" stroke="#8c8c8c" stroke-width="0.7" transform="rotate(-8 426 387)"/></g><path d="M736.5 283 L742 278.5 L747.5 283 L745.5 283 V287.5 H743.5 V284.5 H740.5 V287.5 H738.5 V283Z" fill="#d0d0d0"/><path d="M779 333 L796 336 L821 333 L821 336 L796 339 L779 336Z" fill="#5a5a5a" opacity="0.35"/><path d="M778.2 300 L803 296.9 L821.2 299.1 L795.6 304.2Z" fill="#bababa"/><path d="M778.2 300 L795.6 304.2 L795.6 333.9 L778.7 331.2Z" fill="#afafaf"/><path d="M795.6 304.2 L821.2 299.1 L820.8 332 L795.6 333.9Z" fill="#b5b5b5"/><path d="M778.2 300 L795.6 304.2 L821.2 299.1" fill="none" stroke="#8e8e8e" stroke-width="0.6" stroke-dasharray="1.6 1"/><path d="M795.6 304.2 V333.9" fill="none" stroke="#7e7e7e" stroke-width="0.8" stroke-dasharray="2 1.2"/><text x="786.5" y="322" font-size="6.2" fill="#6e6e6e" text-anchor="middle" font-family="Liberation Sans" transform="scale(0.7 1) translate(337 0)">LEWO</text><text x="808.5" y="321.5" font-size="7" fill="#6e6e6e" text-anchor="middle" font-family="Liberation Sans" textLength="18" lengthAdjust="spacingAndGlyphs">PRZÓD</text><rect x="475" y="459" width="97" height="20.5" rx="3" fill="#000" opacity="0.25" filter="url(#sh)"/><rect x="473.3" y="456.8" width="97.5" height="20.6" rx="3" fill="#2c2c2c"/><rect x="479.3" y="465.2" width="85.7" height="4" rx="2" fill="#ffffff"/><rect x="479.3" y="465.2" width="45" height="4" rx="2" fill="#3c8ee8"/><circle cx="524.3" cy="467.2" r="3.8" fill="#3c8ee8"/><path d="M520 481.2 H527.4 M523.7 477.5 V485.5 M520 481.2 L521.3 480 M520 481.2 L521.3 482.4 M527.4 481.2 L526.1 480 M527.4 481.2 L526.1 482.4" stroke="#cfcfcf" stroke-width="0.7" fill="none"/><rect x="299.8" y="485.5" width="152.89999999999998" height="30.6" rx="3" fill="#000" opacity="0.25" filter="url(#sh)"/><rect x="298.3" y="483.6" width="152.89999999999998" height="30.6" rx="3" fill="#2c2c2c"/><rect x="459.9" y="485.5" width="151.89999999999998" height="30.6" rx="3" fill="#000" opacity="0.25" filter="url(#sh)"/><rect x="458.4" y="483.6" width="151.89999999999998" height="30.6" rx="3" fill="#2c2c2c"/><rect x="620.0" y="485.5" width="89.79999999999995" height="30.6" rx="3" fill="#000" opacity="0.25" filter="url(#sh)"/><rect x="618.5" y="483.6" width="89.79999999999995" height="30.6" rx="3" fill="#2c2c2c"/><rect x="717.4" y="485.5" width="30.399999999999977" height="30.6" rx="3" fill="#000" opacity="0.25" filter="url(#sh)"/><rect x="715.9" y="483.6" width="30.399999999999977" height="30.6" rx="3" fill="#2c2c2c"/><rect x="303" y="485.8" width="23" height="1.5" fill="#111"/><path d="M308 501.5 Q305 500 305.8 497.5 Q307.5 494.3 314.5 494.3 Q322.8 494.3 323.3 498 Q323.3 501.8 315.5 502.3" fill="none" stroke="#2aa5e6" stroke-width="1.4"/><path d="M314 490.5 V507" stroke="#2aa5e6" stroke-width="1.4"/><path d="M307 500 L310.5 502.5 L306.5 504.5Z" fill="#2aa5e6"/><path d="M323 490 L326 494 H320Z" fill="#2aa5e6"/><path d="M339 500 V494 Q339 492.8 340.2 492.8 Q341.3 492.8 341.3 494 V491.5 Q341.3 490.3 342.5 490.3 Q343.6 490.3 343.6 491.5 V491.8 Q343.6 490.7 344.8 490.7 Q345.9 490.7 345.9 491.8 V493 Q345.9 492 347 492 Q348.2 492 348.2 493 V500 Q348.2 506 343.5 506 Q340.5 506 338.2 502 L336 498.5 Q335.5 497 337 496.8 Z" fill="#fff"/><path d="M370.5 492.5 H379.5 M375 492.5 V505 M370.8 500.5 L375 504.8 L379.2 500.5" stroke="#fff" stroke-width="1.6" fill="none"/><circle cx="405.8" cy="492.3" r="1.7" fill="#fff"/><path d="M403.2 494.8 H408.4 L410 501 L409 501.3 L407.8 497 V507 H406.3 V501 H405.3 V507 H403.8 V497 L402.6 501.3 L401.6 501Z" fill="#fff"/><rect x="429.5" y="495" width="10" height="8" rx="0.8" fill="#fff"/><path d="M439.5 497.5 L444 495 V503 L439.5 500.5Z" fill="#fff"/><path d="M442 487.5 L445.5 491.5 H438.5Z" fill="#fff"/><path d="M466.5 502 Q464 502 464 499.5 Q464 497 466.5 497 Q467 493.5 470.5 493.5 Q472 491.5 474.5 492.5 Q478 492.5 478 496 Q480 497 479.5 500 Q479 502.5 476 502.5Z" fill="none" stroke="#fff" stroke-width="1.3"/><path d="M470 500.5 L476 494.5" stroke="#fff" stroke-width="1.3"/><circle cx="485.5" cy="488.3" r="3.6" fill="#2aa5e6"/><text x="485.5" y="490.2" font-size="4.5" fill="#fff" text-anchor="middle" font-family="Liberation Sans">0</text><path d="M497 504 L508.5 492.5 L511 495 L499.5 506.5Z" fill="#fff"/><path d="M500 502 L501.5 503.5 M502.5 499.5 L504 501 M505 497 L506.5 498.5" stroke="#2c2c2c" stroke-width="0.6"/><path d="M528 495 L534 492 L540 495 V502 L534 505.5 L528 502Z" fill="#fff"/><path d="M530 497 V502.5 L534 504.5" fill="none" stroke="#2c2c2c" stroke-width="0.8"/><path d="M541 487.5 L544.5 491.5 H537.5Z" fill="#fff"/><path d="M558.5 494.2 H564 L565.5 496 H572.3 V504.7 H558.5Z" fill="#fff"/><path d="M558.5 497.5 H572.3" stroke="#2c2c2c" stroke-width="0.5"/><rect x="583.3" y="487.4" width="24.7" height="26" fill="#222"/><rect x="583.3" y="486.8" width="24.7" height="1.2" fill="#0a0a0a"/><path d="M596 491.8 L601 494.8 L596 497.6 L591 494.8Z" fill="#29b6f0"/><path d="M588.2 498.6 L594 501.5 V507.3 L588.2 504.4Z" fill="#29b6f0"/><path d="M603.8 498.6 L598 501.5 V507.3 L603.8 504.4Z" fill="#29b6f0"/><rect x="629.5" y="492" width="6" height="5.4" fill="#fff"/><rect x="624.7" y="501.5" width="5.8" height="4.8" fill="#fff"/><rect x="635" y="501.5" width="5.8" height="4.8" fill="#fff"/><path d="M632.5 497.4 V499.5 M627.6 501.5 V499.5 H638 V501.5" stroke="#fff" stroke-width="1" fill="none"/><rect x="659" y="491.2" width="9.5" height="15.3" fill="#fff"/><circle cx="663.7" cy="495.5" r="1.8" fill="#2c2c2c"/><path d="M661 500.5 H666.5 M661 503 H666.5" stroke="#2c2c2c" stroke-width="0.9"/><circle cx="693.3" cy="498.8" r="5.2" fill="#fff"/><circle cx="693.3" cy="498.8" r="2" fill="#2c2c2c"/><rect x="692" y="491.8" width="2.6" height="3" fill="#fff" transform="rotate(0 693.3 498.8)"/><rect x="692" y="491.8" width="2.6" height="3" fill="#fff" transform="rotate(45 693.3 498.8)"/><rect x="692" y="491.8" width="2.6" height="3" fill="#fff" transform="rotate(90 693.3 498.8)"/><rect x="692" y="491.8" width="2.6" height="3" fill="#fff" transform="rotate(135 693.3 498.8)"/><rect x="692" y="491.8" width="2.6" height="3" fill="#fff" transform="rotate(180 693.3 498.8)"/><rect x="692" y="491.8" width="2.6" height="3" fill="#fff" transform="rotate(225 693.3 498.8)"/><rect x="692" y="491.8" width="2.6" height="3" fill="#fff" transform="rotate(270 693.3 498.8)"/><rect x="692" y="491.8" width="2.6" height="3" fill="#fff" transform="rotate(315 693.3 498.8)"/><rect x="725" y="492" width="9.5" height="11" fill="none" stroke="#fff" stroke-width="1.2"/><path d="M726 502 L730 496 L733 500 L734.5 498.5 V502.5Z" fill="#fff"/><rect x="731" y="499.5" width="6" height="7" fill="#fff"/><path d="M731 502 H737 M731 504 H737" stroke="#2c2c2c" stroke-width="0.6"/></svg>
</div></body></html>
